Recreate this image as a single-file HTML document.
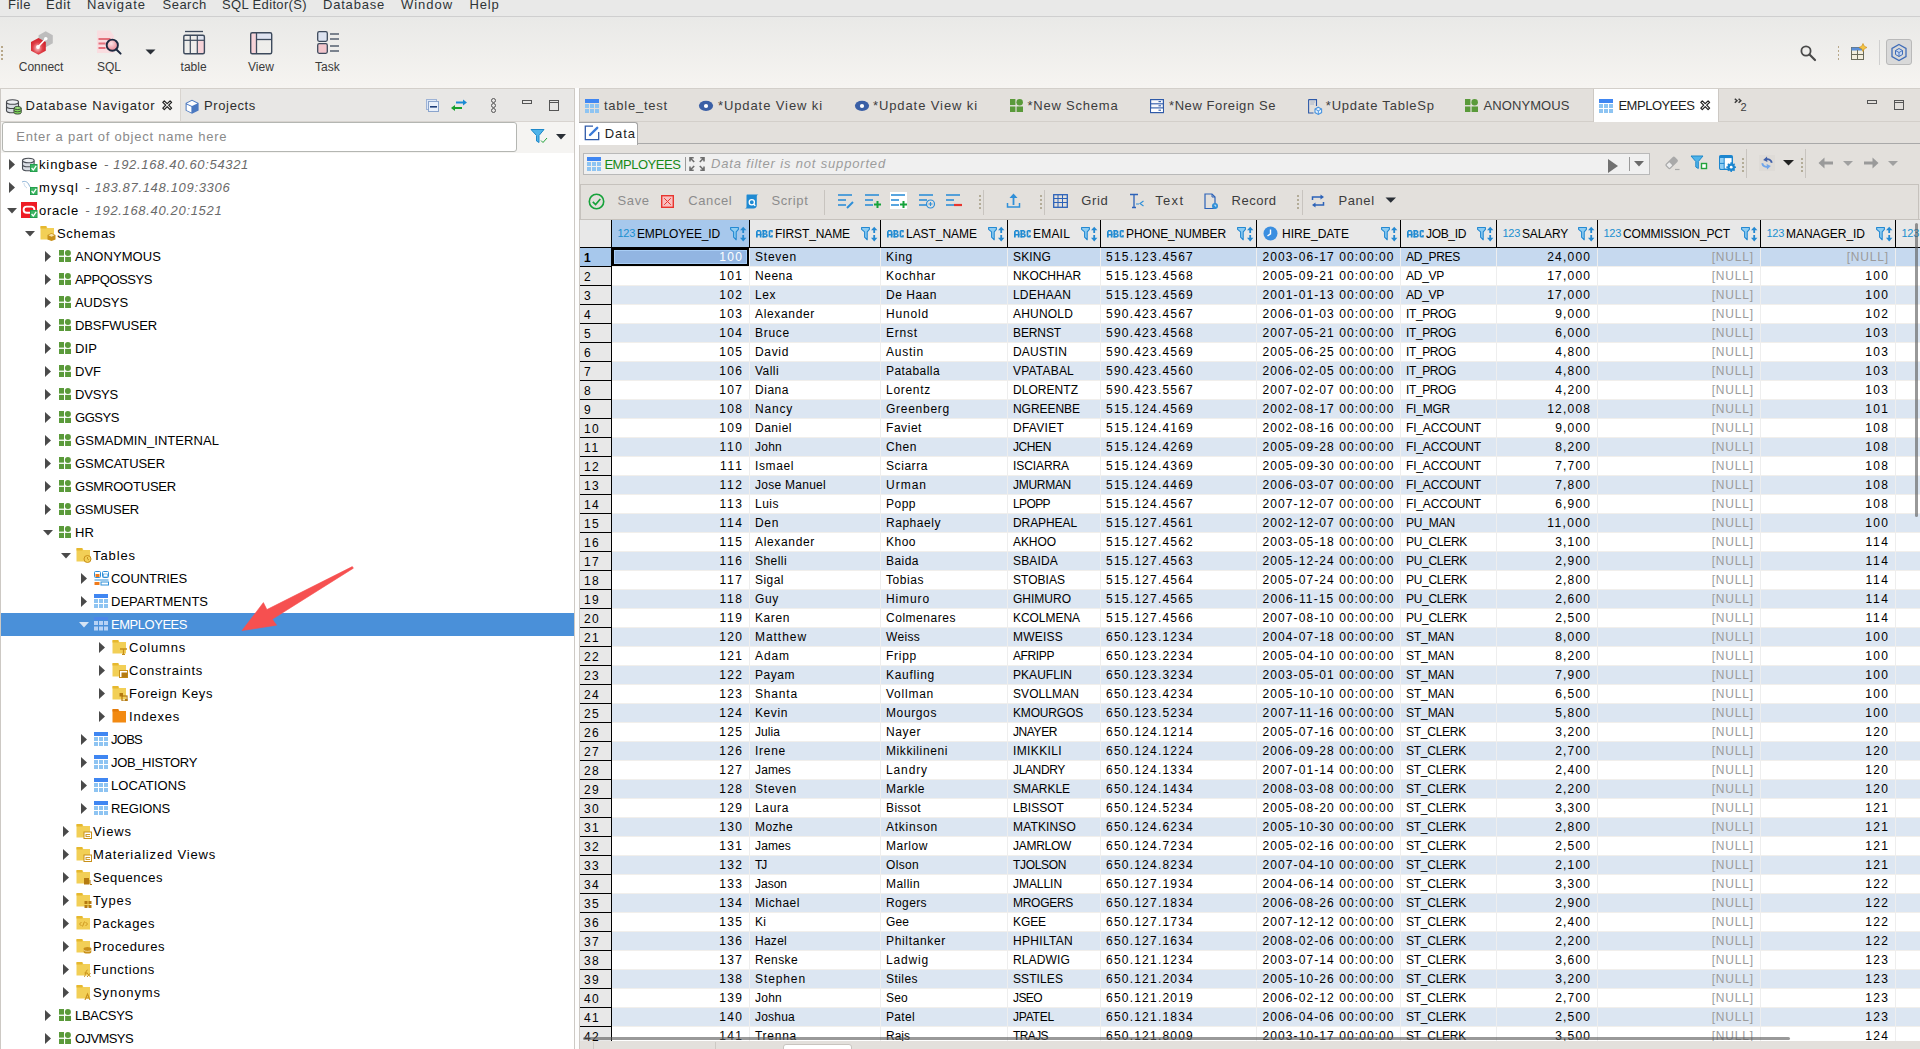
<!DOCTYPE html>
<html><head><meta charset="utf-8"><title>DBeaver</title><style>
html,body{margin:0;padding:0;width:1920px;height:1049px;overflow:hidden;background:#ffffff;}
body{position:relative;font-family:"Liberation Sans",sans-serif;}
div,svg{position:absolute;box-sizing:content-box;}
.t{white-space:pre;line-height:normal;}
</style></head><body>
<div style="left:0px;top:0px;width:1920px;height:16px;background:#e9e9e8;"></div>
<div style="left:0px;top:16px;width:1920px;height:1px;background:#cfcfcf;"></div>
<div class="t" style="left:8.00px;top:-3px;font-size:13px;color:#2e3436;letter-spacing:0.512px">File</div>
<div class="t" style="left:46.00px;top:-3px;font-size:13px;color:#2e3436;letter-spacing:0.648px">Edit</div>
<div class="t" style="left:87.00px;top:-3px;font-size:13px;color:#2e3436;letter-spacing:0.961px">Navigate</div>
<div class="t" style="left:162.60px;top:-3px;font-size:13px;color:#2e3436;letter-spacing:0.466px">Search</div>
<div class="t" style="left:222.00px;top:-3px;font-size:13px;color:#2e3436;letter-spacing:0.351px">SQL Editor(S)</div>
<div class="t" style="left:323.00px;top:-3px;font-size:13px;color:#2e3436;letter-spacing:0.793px">Database</div>
<div class="t" style="left:401.00px;top:-3px;font-size:13px;color:#2e3436;letter-spacing:0.958px">Window</div>
<div class="t" style="left:469.60px;top:-3px;font-size:13px;color:#2e3436;letter-spacing:0.812px">Help</div>
<div style="left:0px;top:17px;width:1920px;height:71px;background:linear-gradient(#e9e9e7,#f6f4f1);"></div>
<div style="left:0px;top:88px;width:1920px;height:1px;background:#d3cfca;"></div>
<div style="left:1px;top:46px;width:2px;height:2px;background:#b8a88a;"></div>
<div style="left:1px;top:50px;width:2px;height:2px;background:#b8a88a;"></div>
<div style="left:1px;top:54px;width:2px;height:2px;background:#b8a88a;"></div>
<div style="left:1px;top:58px;width:2px;height:2px;background:#b8a88a;"></div>
<svg style="left:28px;top:29px" width="28" height="28" viewBox="0 0 28 28">
<defs><radialGradient id="cg" cx="0.45" cy="0.6" r="0.6"><stop offset="0" stop-color="#f6c9cc"/><stop offset="0.55" stop-color="#e04048"/><stop offset="1" stop-color="#d01e28"/></radialGradient></defs>
<g transform="translate(-28,-29)">
<polygon points="45.7,31.2 52.8,35.2 52.8,43.2 45.7,47.2 38.6,43.2 38.6,35.2" fill="#bdbdbd"/>
<polygon points="38.5,38 45.8,42 45.8,50.8 38.5,54.8 31,50.8 31,42" fill="url(#cg)"/>
<line x1="38" y1="47" x2="45.5" y2="39" stroke="#ffffff" stroke-width="1.6" stroke-linecap="round"/>
<circle cx="45.8" cy="38.8" r="1.8" fill="#ffffff"/>
<circle cx="38" cy="47" r="1.9" fill="#ffffff"/>
</g></svg>
<svg style="left:96px;top:29px" width="28" height="28" viewBox="0 0 28 28">
<defs><radialGradient id="sg" cx="0.4" cy="0.35" r="0.7"><stop offset="0" stop-color="#fbe3e6"/><stop offset="1" stop-color="#e8808c"/></radialGradient></defs>
<g transform="translate(-96,-29)">
<polygon points="97,30.5 110,30.5 114,36 114,53 97,53" fill="#f9dde0"/>
<rect x="98.5" y="38" width="12" height="2" fill="#e4707c"/>
<rect x="98.5" y="42.5" width="7" height="2" fill="#e4707c"/>
<rect x="98.5" y="47" width="7" height="2" fill="#e4707c"/>
<circle cx="112.3" cy="45.2" r="5.6" fill="url(#sg)" stroke="#1d2940" stroke-width="1.9"/>
<line x1="116.2" y1="49.2" x2="120.6" y2="53.6" stroke="#1d2940" stroke-width="2" stroke-linecap="round"/>
</g></svg>
<svg style="left:145px;top:49px" width="12" height="7" viewBox="0 0 12 7"><polygon points="0.5,0.5 10.5,0.5 5.5,5.5" fill="#2a2f36"/></svg>
<svg style="left:180px;top:28px" width="30" height="30" viewBox="0 0 30 30">
<g transform="translate(-180,-28)">
<line x1="185" y1="31.5" x2="203" y2="31.5" stroke="#3d4a5c" stroke-width="1.3"/>
<rect x="203" y="36" width="2" height="17" fill="#f6d3d8"/>
<rect x="198" y="36" width="6" height="17" fill="#f6d3d8"/>
<rect x="198" y="36" width="6" height="4" fill="#dfe3ee"/>
<rect x="183.8" y="35.3" width="20.6" height="18.4" rx="1.5" fill="none" stroke="#3d4a5c" stroke-width="1.4"/>
<line x1="184" y1="40.3" x2="204" y2="40.3" stroke="#3d4a5c" stroke-width="1.2"/>
<line x1="190.3" y1="35.5" x2="190.3" y2="53.5" stroke="#3d4a5c" stroke-width="1.2"/>
<line x1="197.3" y1="35.5" x2="197.3" y2="53.5" stroke="#3d4a5c" stroke-width="1.2"/>
</g></svg>
<svg style="left:246px;top:28px" width="30" height="30" viewBox="0 0 30 30">
<g transform="translate(-246,-28)">
<rect x="251" y="33" width="5" height="20" fill="#f6d3d8"/>
<rect x="257" y="33" width="15" height="6" fill="#dfe3f0"/>
<rect x="250.7" y="32.7" width="21" height="21" rx="1.5" fill="none" stroke="#3d4a5c" stroke-width="1.4"/>
<line x1="256.5" y1="33" x2="256.5" y2="53.5" stroke="#3d4a5c" stroke-width="1.3"/>
<line x1="256.5" y1="39.5" x2="272" y2="39.5" stroke="#3d4a5c" stroke-width="1.3"/>
</g></svg>
<svg style="left:314px;top:28px" width="30" height="30" viewBox="0 0 30 30">
<g transform="translate(-314,-28)">
<rect x="317.7" y="31.7" width="9.6" height="9.6" rx="1.5" fill="#dde3f0" stroke="#3d4a5c" stroke-width="1.3"/>
<rect x="317.7" y="43.7" width="9.6" height="9.6" rx="1.5" fill="#f2c6cc" stroke="#3d4a5c" stroke-width="1.3"/>
<line x1="330" y1="34" x2="339" y2="34" stroke="#3d4a5c" stroke-width="1.3"/>
<line x1="330" y1="39" x2="339" y2="39" stroke="#3d4a5c" stroke-width="1.3"/>
<line x1="330" y1="46" x2="339" y2="46" stroke="#3d4a5c" stroke-width="1.3"/>
<line x1="330" y1="51" x2="339" y2="51" stroke="#3d4a5c" stroke-width="1.3"/>
</g></svg>
<svg style="left:1798px;top:43px" width="22" height="20" viewBox="0 0 22 20">
<g transform="translate(-1798,-43)">
<circle cx="1806" cy="51" r="4.6" fill="none" stroke="#4a4a4a" stroke-width="1.8"/>
<line x1="1809.5" y1="54.5" x2="1815" y2="60" stroke="#4a4a4a" stroke-width="2.2" stroke-linecap="round"/>
</g></svg>
<div style="left:1838px;top:46px;width:1px;height:2px;background:#b8a88a;"></div>
<div style="left:1838px;top:50px;width:1px;height:2px;background:#b8a88a;"></div>
<div style="left:1838px;top:54px;width:1px;height:2px;background:#b8a88a;"></div>
<div style="left:1838px;top:58px;width:1px;height:2px;background:#b8a88a;"></div>
<svg style="left:1849px;top:43px" width="20" height="20" viewBox="0 0 20 20">
<g transform="translate(-1849,-43)">
<rect x="1851.5" y="47.5" width="12" height="12" fill="#f3eedd" stroke="#6b6b5a" stroke-width="1"/>
<rect x="1851.5" y="47.5" width="12" height="3" fill="#5b8fd8"/>
<line x1="1857.5" y1="50" x2="1857.5" y2="59.5" stroke="#6b6b5a" stroke-width="1"/>
<line x1="1851.5" y1="54.5" x2="1863.5" y2="54.5" stroke="#6b6b5a" stroke-width="1"/>
<path d="M1863 43.5 L1864.3 46.2 L1867 47.5 L1864.3 48.8 L1863 51.5 L1861.7 48.8 L1859 47.5 L1861.7 46.2 Z" fill="#f5c542" stroke="#c98a12" stroke-width="0.6"/>
</g></svg>
<div style="left:1879px;top:40px;width:1px;height:25px;background:#cfcfcf;"></div>
<div style="left:1886px;top:39px;width:24px;height:24px;border:1px solid #b9b9b9;background:#d9d9d9;border-radius:3px;"></div>
<svg style="left:1889px;top:42px" width="20" height="20" viewBox="0 0 20 20">
<g transform="translate(-1889,-42)">
<polygon points="1899,44.5 1906,48.5 1906,56.5 1899,60.5 1892,56.5 1892,48.5" fill="none" stroke="#3f6cb8" stroke-width="1.3"/>
<polygon points="1899,48.5 1902.5,50.5 1902.5,54.5 1899,56.5 1895.5,54.5 1895.5,50.5" fill="#c9d9f2" stroke="#3f6cb8" stroke-width="1"/>
<line x1="1899" y1="52.5" x2="1899" y2="56.5" stroke="#3f6cb8" stroke-width="0.9"/>
<line x1="1895.5" y1="50.5" x2="1899" y2="52.5" stroke="#3f6cb8" stroke-width="0.9"/>
<line x1="1902.5" y1="50.5" x2="1899" y2="52.5" stroke="#3f6cb8" stroke-width="0.9"/>
</g></svg>
<div class="t" style="left:18.75px;top:60px;font-size:12px;color:#3a3a3a">Connect</div>
<div class="t" style="left:97.00px;top:60px;font-size:12px;color:#3a3a3a">SQL</div>
<div class="t" style="left:180.60px;top:60px;font-size:12px;color:#3a3a3a">table</div>
<div class="t" style="left:248.00px;top:60px;font-size:12px;color:#3a3a3a">View</div>
<div class="t" style="left:315.00px;top:60px;font-size:12px;color:#3a3a3a">Task</div>
<div style="left:0px;top:89px;width:575px;height:960px;background:#ffffff;"></div>
<div style="left:0px;top:89px;width:1px;height:960px;background:#cdc9c4;"></div>
<div style="left:574px;top:89px;width:1px;height:960px;background:#cdc9c4;"></div>
<div style="left:1px;top:89px;width:573px;height:32px;background:#e8e7e5;"></div>
<div style="left:1px;top:89px;width:179px;height:32px;background:#f5f4f2;"></div>
<div style="left:180px;top:89px;width:1px;height:32px;background:#d8d4cf;"></div>
<div style="left:1px;top:121px;width:573px;height:1px;background:#d8d4d0;"></div>
<div style="left:1px;top:122px;width:573px;height:31px;background:#f5f4f2;"></div>
<div style="left:2px;top:122px;width:513px;height:28px;border:1px solid #b4b6b2;background:#ffffff;border-radius:3px;"></div>
<div class="t" style="left:25.50px;top:98px;font-size:13px;color:#1e1e1e;letter-spacing:0.839px">Database Navigator</div>
<div class="t" style="left:204.00px;top:98px;font-size:13px;color:#2e2e2e;letter-spacing:0.629px">Projects</div>
<div class="t" style="left:16.30px;top:129px;font-size:13px;color:#8a8a8a;letter-spacing:0.767px">Enter a part of object name here</div>
<svg style="left:5px;top:99px" width="18" height="17" viewBox="0 0 18 17">
<g transform="translate(-5,-99)">
<path d="M6.5 102 V110.5 A6 2.3 0 0 0 18.5 110.5 V102" fill="#d9dde3" stroke="#45484d" stroke-width="1.1"/>
<ellipse cx="12.5" cy="102" rx="6" ry="2.3" fill="#eef0f3" stroke="#45484d" stroke-width="1.1"/>
<path d="M6.5 106.2 A6 2.3 0 0 0 18.5 106.2" fill="none" stroke="#45484d" stroke-width="1.1"/>
<path d="M14 108 V112.6 A3.6 1.5 0 0 0 21.2 112.6 V108" fill="#7fd85c" stroke="#3d4a3a" stroke-width="1"/>
<ellipse cx="17.6" cy="108" rx="3.6" ry="1.5" fill="#9be77c" stroke="#3d4a3a" stroke-width="1"/>
<path d="M14 110.3 A3.6 1.5 0 0 0 21.2 110.3" fill="none" stroke="#3d4a3a" stroke-width="0.9"/>
</g></svg>
<svg style="left:162px;top:100px" width="11" height="11" viewBox="0 0 11 11"><polygon points="0.8,2.3 2.3,0.8 5.2,3.7 8.1,0.8 9.6,2.3 6.7,5.2 9.6,8.1 8.1,9.6 5.2,6.7 2.3,9.6 0.8,8.1 3.7,5.2" fill="#f5f4f2" stroke="#1e1e1e" stroke-width="1.2" stroke-linejoin="round"/></svg>
<svg style="left:185px;top:99px" width="15" height="15" viewBox="0 0 15 15">
<g transform="translate(-185,-99)">
<polygon points="192,99.8 198.6,103 198.6,110.6 192,113.8 185.6,110.6 185.6,103" fill="#4a78c0"/>
<polygon points="192,100.8 197.4,103.4 192,106 186.6,103.4" fill="#ffffff"/>
<polygon points="186.6,104.4 191.4,106.8 191.4,112.6 186.6,110.2" fill="#ffffff"/>
</g></svg>
<svg style="left:425px;top:98px" width="16" height="16" viewBox="0 0 16 16">
<rect x="1.5" y="1.5" width="10" height="10" fill="#dde7f6" stroke="#9db3d6" stroke-width="1"/>
<rect x="3.5" y="3.5" width="10" height="10" fill="#e9f0fa" stroke="#8aa4cc" stroke-width="1"/>
<rect x="5" y="8" width="7" height="1.6" fill="#1f3f7a"/>
</svg>
<svg style="left:450px;top:99px" width="18" height="13" viewBox="0 0 18 13">
<path d="M6 3.5 H15" stroke="#1a8ad4" stroke-width="2"/><polygon points="13,0.5 17,3.5 13,6.5" fill="#1a8ad4"/>
<path d="M4 9 H12" stroke="#17a02c" stroke-width="2"/><polygon points="5,6 1,9 5,12" fill="#17a02c"/>
</svg>
<svg style="left:489px;top:97px" width="9" height="17" viewBox="0 0 9 17"><circle cx="4.5" cy="3.5" r="2" fill="none" stroke="#555" stroke-width="1"/><circle cx="4.5" cy="8.5" r="2" fill="none" stroke="#555" stroke-width="1"/><circle cx="4.5" cy="13.5" r="2" fill="none" stroke="#555" stroke-width="1"/></svg>
<div style="left:522px;top:100px;width:8px;height:2px;border:1px solid #555555;background:transparent;"></div>
<div style="left:549px;top:100px;width:8px;height:9px;border:1px solid #555555;background:transparent;"></div>
<div style="left:550px;top:102px;width:8px;height:1px;background:#555555;"></div>
<svg style="left:529px;top:128px" width="20" height="17" viewBox="0 0 20 17">
<polygon points="2,1.5 15,1.5 10,7.5 10,14.5 7.5,13 7.5,7.5" fill="#4fb4ea" stroke="#1e88c9" stroke-width="1"/>
<path d="M12 12.5 L14 14.5 L18 10" fill="none" stroke="#22a33a" stroke-width="1"/>
</svg>
<svg style="left:556px;top:134px" width="11" height="6" viewBox="0 0 11 6"><polygon points="0,0 10,0 5,5.5" fill="#2a2f36"/></svg>
<div style="left:575px;top:88px;width:4px;height:961px;background:#fdfdfd;"></div>
<div style="left:579px;top:89px;width:1341px;height:960px;background:#e3e0dc;"></div>
<div style="left:579px;top:89px;width:1px;height:960px;background:#cdc9c4;"></div>
<div style="left:580px;top:121px;width:1340px;height:1px;background:#d3cfca;"></div>
<div style="left:1594px;top:89px;width:124px;height:33px;background:#ffffff;"></div>
<div style="left:1593px;top:89px;width:1px;height:33px;background:#cdc9c4;"></div>
<div style="left:1718px;top:89px;width:1px;height:33px;background:#cdc9c4;"></div>
<div class="t" style="left:604.00px;top:98px;font-size:13px;color:#3c3c3c;letter-spacing:0.762px">table_test</div>
<div class="t" style="left:718.00px;top:98px;font-size:13px;color:#3c3c3c;letter-spacing:0.897px">*Update View ki</div>
<div class="t" style="left:873.00px;top:98px;font-size:13px;color:#3c3c3c;letter-spacing:0.897px">*Update View ki</div>
<div class="t" style="left:1027.50px;top:98px;font-size:13px;color:#3c3c3c;letter-spacing:0.784px">*New Schema</div>
<div class="t" style="left:1169.00px;top:98px;font-size:13px;color:#3c3c3c;letter-spacing:0.581px">*New Foreign Se</div>
<div class="t" style="left:1325.80px;top:98px;font-size:13px;color:#3c3c3c;letter-spacing:0.777px">*Update TableSp</div>
<div class="t" style="left:1483.50px;top:98px;font-size:13px;color:#3c3c3c;letter-spacing:0.085px">ANONYMOUS</div>
<div class="t" style="left:1618.40px;top:98px;font-size:13px;color:#1e1e1e;letter-spacing:-0.467px">EMPLOYEES</div>
<div style="left:638px;top:143px;width:1282px;height:1px;background:#a9a9a9;"></div>
<div style="left:579px;top:122px;width:58px;height:22px;background:#ffffff;border-top:1px solid #a4a4a4;border-right:1px solid #a4a4a4;border-top-right-radius:3px;"></div>
<div class="t" style="left:604.80px;top:126px;font-size:13px;color:#1e1e1e;letter-spacing:0.883px">Data</div>
<div style="left:583px;top:153px;width:1065px;height:20px;border:1px solid #b9b9b9;background:#f0f0f0;"></div>
<div class="t" style="left:604.40px;top:157px;font-size:13px;color:#178a17;letter-spacing:-0.467px">EMPLOYEES</div>
<div style="left:685px;top:157px;width:1px;height:14px;background:#9a9a9a;"></div>
<div class="t" style="left:711.00px;top:156px;font-size:13px;color:#9c9c9c;letter-spacing:0.830px;font-style:italic">Data filter is not supported</div>
<div style="left:1629px;top:157px;width:1px;height:14px;background:#9a9a9a;"></div>
<div style="left:580px;top:184px;width:1339px;height:1px;background:#c6c2bd;"></div>
<div style="left:580px;top:184px;width:1px;height:36px;background:#c6c2bd;"></div>
<div style="left:1918px;top:184px;width:1px;height:36px;background:#c6c2bd;"></div>
<div class="t" style="left:617.60px;top:193px;font-size:13px;color:#8c8c8c;letter-spacing:0.590px">Save</div>
<div class="t" style="left:688.30px;top:193px;font-size:13px;color:#8c8c8c;letter-spacing:0.589px">Cancel</div>
<div class="t" style="left:771.40px;top:193px;font-size:13px;color:#8c8c8c;letter-spacing:0.628px">Script</div>
<div class="t" style="left:1081.30px;top:193px;font-size:13px;color:#3c3c3c;letter-spacing:0.609px">Grid</div>
<div class="t" style="left:1155.30px;top:193px;font-size:13px;color:#3c3c3c;letter-spacing:1.289px">Text</div>
<div class="t" style="left:1231.60px;top:193px;font-size:13px;color:#3c3c3c;letter-spacing:0.513px">Record</div>
<div class="t" style="left:1338.60px;top:193px;font-size:13px;color:#3c3c3c;letter-spacing:0.550px">Panel</div>
<div style="left:824px;top:190px;width:1px;height:25px;background:#c8c4bf;"></div>
<div style="left:983px;top:190px;width:1px;height:25px;background:#c8c4bf;"></div>
<div style="left:1044px;top:190px;width:1px;height:25px;background:#c8c4bf;"></div>
<div style="left:1302px;top:190px;width:1px;height:25px;background:#c8c4bf;"></div>
<div style="left:1746px;top:149px;width:1px;height:29px;background:#c8c4bf;"></div>
<div style="left:1805px;top:149px;width:1px;height:29px;background:#c8c4bf;"></div>
<svg style="left:585px;top:99px" width="14" height="14" viewBox="0 0 14 14">
<rect x="0" y="0" width="14" height="4" fill="#3f86f2"/>
<rect x="0" y="5" width="4" height="4" fill="#8ec4f2"/><rect x="5" y="5" width="4" height="4" fill="#8ec4f2"/><rect x="10" y="5" width="4" height="4" fill="#8ec4f2"/>
<rect x="0" y="10" width="4" height="4" fill="#8ec4f2"/><rect x="5" y="10" width="4" height="4" fill="#8ec4f2"/><rect x="10" y="10" width="4" height="4" fill="#8ec4f2"/>
</svg>
<svg style="left:698px;top:100px" width="16" height="12" viewBox="0 0 16 12"><ellipse cx="8" cy="5.8" rx="7.1" ry="5.1" fill="#3a5fa6"/><circle cx="8" cy="6" r="2.1" fill="#ffffff"/></svg>
<svg style="left:854px;top:100px" width="16" height="12" viewBox="0 0 16 12"><ellipse cx="8" cy="5.8" rx="7.1" ry="5.1" fill="#3a5fa6"/><circle cx="8" cy="6" r="2.1" fill="#ffffff"/></svg>
<svg style="left:1010px;top:99px" width="13" height="13" viewBox="0 0 13 13"><g transform="scale(1.083)"><rect x="0" y="0" width="5" height="5.6" fill="#5a9a3a"/><circle cx="8.9" cy="3" r="3" fill="#5a9a3a"/><rect x="0" y="6.9" width="5" height="5.1" fill="#5a9a3a"/><rect x="6.1" y="6.9" width="5.9" height="5.1" fill="#5a9a3a"/></g></svg>
<svg style="left:1149px;top:98px" width="16" height="16" viewBox="0 0 16 16">
<rect x="1.6" y="1.6" width="12.8" height="13" fill="#f7f8fb" stroke="#2f5aa8" stroke-width="1.2"/>
<rect x="2.2" y="10.4" width="11.6" height="3.6" fill="#ffffff"/>
<line x1="1.6" y1="5.8" x2="14.4" y2="5.8" stroke="#2f5aa8" stroke-width="1.1"/>
<line x1="1.6" y1="9.9" x2="14.4" y2="9.9" stroke="#2f5aa8" stroke-width="1.1"/>
<line x1="9.5" y1="3.6" x2="12" y2="3.6" stroke="#2f5aa8" stroke-width="1.1"/>
<line x1="9.5" y1="7.8" x2="12" y2="7.8" stroke="#2f5aa8" stroke-width="1.1"/>
<line x1="9.5" y1="12.2" x2="12" y2="12.2" stroke="#2f5aa8" stroke-width="1.1"/>
</svg>
<svg style="left:1306px;top:98px" width="17" height="17" viewBox="0 0 17 17">
<path d="M2.6 1.6 H10.5 V8 M2.6 1.6 V15 H7.5" fill="none" stroke="#2f5aa8" stroke-width="1.1"/>
<line x1="4.2" y1="4" x2="9" y2="4" stroke="#a9b4c8" stroke-width="1"/>
<line x1="4.2" y1="6" x2="8" y2="6" stroke="#a9b4c8" stroke-width="1"/>
<polygon points="12.3,9.2 15.6,11 15.6,14.6 12.3,16.4 9,14.6 9,11" fill="#e8f2fc" stroke="#4a95e0" stroke-width="1.1"/>
<path d="M9 11 L12.3 12.8 L15.6 11 M12.3 12.8 V16.4" fill="none" stroke="#4a95e0" stroke-width="1"/>
</svg>
<svg style="left:1465px;top:99px" width="13" height="13" viewBox="0 0 13 13"><g transform="scale(1.083)"><rect x="0" y="0" width="5" height="5.6" fill="#5a9a3a"/><circle cx="8.9" cy="3" r="3" fill="#5a9a3a"/><rect x="0" y="6.9" width="5" height="5.1" fill="#5a9a3a"/><rect x="6.1" y="6.9" width="5.9" height="5.1" fill="#5a9a3a"/></g></svg>
<svg style="left:1599px;top:99px" width="14" height="14" viewBox="0 0 14 14">
<rect x="0" y="0" width="14" height="4" fill="#3f86f2"/>
<rect x="0" y="5" width="4" height="4" fill="#8ec4f2"/><rect x="5" y="5" width="4" height="4" fill="#8ec4f2"/><rect x="10" y="5" width="4" height="4" fill="#8ec4f2"/>
<rect x="0" y="10" width="4" height="4" fill="#8ec4f2"/><rect x="5" y="10" width="4" height="4" fill="#8ec4f2"/><rect x="10" y="10" width="4" height="4" fill="#8ec4f2"/>
</svg>
<svg style="left:1700px;top:100px" width="11" height="11" viewBox="0 0 11 11"><polygon points="0.8,2.3 2.3,0.8 5.2,3.7 8.1,0.8 9.6,2.3 6.7,5.2 9.6,8.1 8.1,9.6 5.2,6.7 2.3,9.6 0.8,8.1 3.7,5.2" fill="#ffffff" stroke="#1e1e1e" stroke-width="1.2" stroke-linejoin="round"/></svg>
<svg style="left:1734px;top:98px" width="9" height="6" viewBox="0 0 9 6"><path d="M0.8 0.8 L3 2.8 L0.8 4.8 M4.6 0.8 L6.8 2.8 L4.6 4.8" fill="none" stroke="#3a3a3a" stroke-width="1.5"/></svg>
<div class="t" style="left:1740.50px;top:101px;font-size:11px;color:#3c3c3c">2</div>
<div style="left:1867px;top:100px;width:8px;height:2px;border:1px solid #555555;background:transparent;"></div>
<div style="left:1894px;top:100px;width:8px;height:8px;border:1px solid #555555;background:transparent;"></div>
<div style="left:1895px;top:102px;width:8px;height:1px;background:#555555;"></div>
<svg style="left:584px;top:125px" width="16" height="16" viewBox="0 0 16 16">
<path d="M9 1.2 H1.3 V14.7 H14.7 V7" fill="none" stroke="#2f5aa8" stroke-width="1.3"/>
<line x1="6" y1="10" x2="13.2" y2="2.8" stroke="#3a7ad8" stroke-width="2.4" stroke-linecap="round"/>
</svg>
<svg style="left:587px;top:157px" width="14" height="14" viewBox="0 0 14 14">
<rect x="0" y="0" width="14" height="4" fill="#3f86f2"/>
<rect x="0" y="5" width="4" height="4" fill="#8ec4f2"/><rect x="5" y="5" width="4" height="4" fill="#8ec4f2"/><rect x="10" y="5" width="4" height="4" fill="#8ec4f2"/>
<rect x="0" y="10" width="4" height="4" fill="#8ec4f2"/><rect x="5" y="10" width="4" height="4" fill="#8ec4f2"/><rect x="10" y="10" width="4" height="4" fill="#8ec4f2"/>
</svg>
<svg style="left:688px;top:156px" width="18" height="16" viewBox="0 0 18 16">
<g fill="none" stroke="#6e6e6e" stroke-width="1.6">
<path d="M2 5.5 V1.8 H5.7 M2 1.8 L6.2 6"/><path d="M16 5.5 V1.8 H12.3 M16 1.8 L11.8 6"/>
<path d="M2 10.5 V14.2 H5.7 M2 14.2 L6.2 10"/><path d="M16 10.5 V14.2 H12.3 M16 14.2 L11.8 10"/>
</g></svg>
<svg style="left:1607px;top:158px" width="12" height="16" viewBox="0 0 12 16"><polygon points="1,1 11,8 1,15" fill="#707070"/></svg>
<svg style="left:1634px;top:161px" width="11" height="6" viewBox="0 0 11 6"><polygon points="0,0 10,0 5,5.5" fill="#6a6a6a"/></svg>
<svg style="left:1664px;top:155px" width="17" height="16" viewBox="0 0 17 16">
<g transform="rotate(-45 7.5 8)"><rect x="1.2" y="4.6" width="13" height="6.8" rx="1.8" fill="#a9a9a9"/><rect x="2.4" y="5.8" width="4.2" height="4.4" rx="0.8" fill="#ececec"/></g>
<line x1="11" y1="14.5" x2="15.5" y2="14.5" stroke="#a9a9a9" stroke-width="1.2"/>
</svg>
<svg style="left:1690px;top:155px" width="18" height="15" viewBox="0 0 18 15">
<polygon points="1,1 13,1 8.3,6.5 8.3,13.5 5.8,12 5.8,6.5" fill="#4fb4ea" stroke="#1e88c9" stroke-width="1"/>
<rect x="11.5" y="8.5" width="5" height="5" fill="#fff" stroke="#22a33a" stroke-width="1.4"/>
</svg>
<svg style="left:1719px;top:155px" width="17" height="17" viewBox="0 0 17 17">
<rect x="0.7" y="0.7" width="12.6" height="13.6" rx="1.2" fill="#ffffff" stroke="#1c86cf" stroke-width="1.4"/>
<rect x="0.7" y="0.7" width="12.6" height="2.4" fill="#1c86cf"/>
<rect x="1.4" y="3.1" width="3.6" height="10.5" fill="#8fd0f5"/>
<line x1="5.2" y1="3" x2="5.2" y2="14" stroke="#1c86cf" stroke-width="1"/>
<line x1="1" y1="8.4" x2="5.2" y2="8.4" stroke="#1c86cf" stroke-width="1"/>
<circle cx="12.2" cy="12.2" r="3.8" fill="#1c86cf"/>
<g stroke="#1c86cf" stroke-width="1.5"><line x1="12.2" y1="7.3" x2="12.2" y2="17"/><line x1="7.3" y1="12.2" x2="17" y2="12.2"/><line x1="8.8" y1="8.8" x2="15.6" y2="15.6"/><line x1="15.6" y1="8.8" x2="8.8" y2="15.6"/></g>
<circle cx="12.2" cy="12.2" r="1.4" fill="#ffffff"/>
</svg>
<div style="left:1742px;top:158px;width:2px;height:2px;background:#b3ac98;"></div>
<div style="left:1801px;top:158px;width:2px;height:2px;background:#b3ac98;"></div>
<div style="left:1742px;top:162px;width:2px;height:2px;background:#b3ac98;"></div>
<div style="left:1801px;top:162px;width:2px;height:2px;background:#b3ac98;"></div>
<div style="left:1742px;top:166px;width:2px;height:2px;background:#b3ac98;"></div>
<div style="left:1801px;top:166px;width:2px;height:2px;background:#b3ac98;"></div>
<div style="left:1742px;top:170px;width:2px;height:2px;background:#b3ac98;"></div>
<div style="left:1801px;top:170px;width:2px;height:2px;background:#b3ac98;"></div>
<div style="left:1759px;top:155px;width:16px;height:16px;background:#dedbd7;"></div>
<svg style="left:1760px;top:156px" width="14" height="14" viewBox="0 0 14 14">
<path d="M11.8 6.8 C11.2 4 8.6 2.6 6 3.4" fill="none" stroke="#3f5fa8" stroke-width="1.9"/><polygon points="3.2,3.9 7,0.6 7.4,6" fill="#3f5fa8"/>
<path d="M2.2 7.2 C2.8 10 5.4 11.4 8 10.6" fill="none" stroke="#6fa5ea" stroke-width="1.9"/><polygon points="10.8,10.1 7,13.4 6.6,8" fill="#6fa5ea"/>
</svg>
<svg style="left:1783px;top:160px" width="12" height="6" viewBox="0 0 12 6"><polygon points="0,0 11,0 5.5,5.5" fill="#222"/></svg>
<svg style="left:1818px;top:157px" width="16" height="12" viewBox="0 0 16 12"><path d="M15 6 H5" stroke="#9a9a9a" stroke-width="3"/><polygon points="0.5,6 6.5,0.5 6.5,11.5" fill="#9a9a9a"/></svg>
<svg style="left:1843px;top:161px" width="10" height="6" viewBox="0 0 10 6"><polygon points="0,0 10,0 5,5" fill="#a0a0a0"/></svg>
<svg style="left:1863px;top:157px" width="16" height="12" viewBox="0 0 16 12"><path d="M1 6 H11" stroke="#9a9a9a" stroke-width="3"/><polygon points="15.5,6 9.5,0.5 9.5,11.5" fill="#9a9a9a"/></svg>
<svg style="left:1888px;top:161px" width="10" height="6" viewBox="0 0 10 6"><polygon points="0,0 10,0 5,5" fill="#a0a0a0"/></svg>
<svg style="left:588px;top:193px" width="17" height="17" viewBox="0 0 17 17"><circle cx="8.5" cy="8.5" r="7.2" fill="none" stroke="#16a23a" stroke-width="1.6"/><path d="M4.8 8.8 L7.6 11.5 L12.3 6" fill="none" stroke="#16a23a" stroke-width="1.7"/></svg>
<svg style="left:661px;top:195px" width="13" height="13" viewBox="0 0 13 13"><rect x="0.7" y="0.7" width="11.6" height="11.6" fill="#f9c0c0" stroke="#e8352e" stroke-width="1.4"/><path d="M3.2 3.2 L9.8 9.8 M9.8 3.2 L3.2 9.8" stroke="#e8352e" stroke-width="1"/></svg>
<svg style="left:743px;top:192px" width="17" height="18" viewBox="0 0 17 18">
<path d="M4 2.5 H15.5 C14.3 2.5 13.8 3.5 13.8 4.5 V13 C13.8 15 12.8 16.5 10.5 16.5 H1.5 C3 16.5 3.5 15.5 3.5 14.5 V4 C3.5 3 3.8 2.5 4 2.5 Z" fill="#1f8ad2"/>
<circle cx="8.8" cy="10.3" r="2.6" fill="none" stroke="#ffffff" stroke-width="1.3"/><line x1="10.7" y1="12.2" x2="12.3" y2="13.8" stroke="#ffffff" stroke-width="1.4"/>
</svg>
<svg style="left:837px;top:193px" width="18" height="17" viewBox="0 0 18 17"><g stroke="#2f8fd8" stroke-width="1.6"><line x1="1" y1="2" x2="15" y2="2"/><line x1="1" y1="7" x2="9" y2="7"/><line x1="1" y1="12" x2="9" y2="12"/></g><path d="M10 15 L16 9" stroke="#2f8fd8" stroke-width="2"/></svg>
<svg style="left:864px;top:193px" width="18" height="17" viewBox="0 0 18 17"><g stroke="#2f8fd8" stroke-width="1.6"><line x1="1" y1="2" x2="15" y2="2"/><line x1="1" y1="7" x2="9" y2="7"/><line x1="1" y1="12" x2="9" y2="12"/></g><path d="M10 11.5 H17 M13.5 8 V15" stroke="#16a23a" stroke-width="2"/></svg>
<div style="left:890px;top:192px;width:17px;height:17px;background:#ffffff;"></div>
<svg style="left:890px;top:193px" width="18" height="17" viewBox="0 0 18 17"><g stroke="#2f8fd8" stroke-width="1.6"><line x1="1" y1="2" x2="15" y2="2"/><line x1="1" y1="7" x2="9" y2="7"/><line x1="1" y1="12" x2="9" y2="12"/></g><path d="M10 11.5 H17 M13.5 8 V15" stroke="#16a23a" stroke-width="2"/></svg>
<svg style="left:918px;top:193px" width="18" height="17" viewBox="0 0 18 17"><g stroke="#2f8fd8" stroke-width="1.6"><line x1="1" y1="2" x2="15" y2="2"/><line x1="1" y1="7" x2="9" y2="7"/><line x1="1" y1="12" x2="9" y2="12"/></g><circle cx="12.5" cy="11" r="4" fill="none" stroke="#2f8fd8" stroke-width="1.2"/><path d="M10.5 11 H14.5 M12.5 9 V13" stroke="#2f8fd8" stroke-width="1.1"/></svg>
<svg style="left:945px;top:193px" width="18" height="17" viewBox="0 0 18 17"><g stroke="#2f8fd8" stroke-width="1.6"><line x1="1" y1="2" x2="15" y2="2"/><line x1="1" y1="7" x2="9" y2="7"/><line x1="1" y1="12" x2="9" y2="12"/></g><path d="M9 12 H17" stroke="#e8352e" stroke-width="2.2"/></svg>
<div style="left:979px;top:195px;width:2px;height:2px;background:#b3ac98;"></div>
<div style="left:1040px;top:195px;width:2px;height:2px;background:#b3ac98;"></div>
<div style="left:1297px;top:195px;width:2px;height:2px;background:#b3ac98;"></div>
<div style="left:979px;top:199px;width:2px;height:2px;background:#b3ac98;"></div>
<div style="left:1040px;top:199px;width:2px;height:2px;background:#b3ac98;"></div>
<div style="left:1297px;top:199px;width:2px;height:2px;background:#b3ac98;"></div>
<div style="left:979px;top:203px;width:2px;height:2px;background:#b3ac98;"></div>
<div style="left:1040px;top:203px;width:2px;height:2px;background:#b3ac98;"></div>
<div style="left:1297px;top:203px;width:2px;height:2px;background:#b3ac98;"></div>
<div style="left:979px;top:207px;width:2px;height:2px;background:#b3ac98;"></div>
<div style="left:1040px;top:207px;width:2px;height:2px;background:#b3ac98;"></div>
<div style="left:1297px;top:207px;width:2px;height:2px;background:#b3ac98;"></div>
<svg style="left:1006px;top:192px" width="15" height="17" viewBox="0 0 15 17"><path d="M7.5 13 V3" stroke="#2f8fd8" stroke-width="1.8"/><polygon points="3.5,6 7.5,1.5 11.5,6" fill="#2f8fd8"/><path d="M1.5 11 V15 H13.5 V11" fill="none" stroke="#2f8fd8" stroke-width="1.5"/></svg>
<svg style="left:1053px;top:194px" width="15" height="14" viewBox="0 0 15 14"><rect x="0.7" y="0.7" width="13.6" height="12.6" fill="none" stroke="#2c62b8" stroke-width="1.3"/><g stroke="#2c62b8" stroke-width="1"><line x1="1" y1="4.5" x2="14" y2="4.5"/><line x1="1" y1="8.5" x2="14" y2="8.5"/><line x1="5" y1="1" x2="5" y2="13"/><line x1="9.5" y1="1" x2="9.5" y2="13"/></g></svg>
<svg style="left:1129px;top:193px" width="15" height="16" viewBox="0 0 15 16"><path d="M1 1.5 H9 M5 1.5 V14.5 M3 14.5 H7" stroke="#2c62b8" stroke-width="1.3" fill="none"/><path d="M14.5 8 L11 10.5 L14.5 13" fill="none" stroke="#2f8fd8" stroke-width="1.1"/><line x1="7" y1="11" x2="10" y2="11" stroke="#2f8fd8" stroke-width="1"/></svg>
<svg style="left:1204px;top:193px" width="15" height="17" viewBox="0 0 15 17"><path d="M1 1 H8 L11 4 V15.5 H1 Z" fill="none" stroke="#2c62b8" stroke-width="1.2"/><path d="M8 1 V4 H11" fill="none" stroke="#2c62b8" stroke-width="1"/><circle cx="11" cy="13" r="3" fill="#2f8fd8"/><path d="M11 11.5 V13 H12.3" stroke="#fff" stroke-width="0.8" fill="none"/></svg>
<svg style="left:1311px;top:194px" width="14" height="14" viewBox="0 0 14 14"><path d="M1.5 6 V3 H11" fill="none" stroke="#2c62b8" stroke-width="1.5"/><polygon points="9.5,0.5 13,3 9.5,5.5" fill="#2c62b8"/><path d="M12.5 8 V11 H3" fill="none" stroke="#2c62b8" stroke-width="1.5"/><polygon points="4.5,8.5 1,11 4.5,13.5" fill="#2c62b8"/></svg>
<svg style="left:1385px;top:197px" width="12" height="7" viewBox="0 0 12 7"><polygon points="0.5,0.5 11,0.5 5.75,5.8" fill="#2a2f36"/></svg>
<div style="left:1px;top:613px;width:573px;height:23px;background:#4a90d9;"></div>
<svg style="left:9px;top:159px" width="6" height="11" viewBox="0 0 6 11"><polygon points="0,0 6,5.5 0,11" fill="#4a4a4a"/></svg>
<svg style="left:21px;top:157px" width="16" height="16" viewBox="0 0 16 16"><path d="M1.5 3.5 V11.5 A5.8 2.3 0 0 0 13.1 11.5 V3.5" fill="#d9dde3" stroke="#4a4e55" stroke-width="1.1"/><ellipse cx="7.3" cy="3.5" rx="5.8" ry="2.3" fill="#eef0f3" stroke="#4a4e55" stroke-width="1.1"/><path d="M1.5 7.5 A5.8 2.3 0 0 0 13.1 7.5" fill="none" stroke="#4a4e55" stroke-width="1.1"/></svg>
<svg style="left:30px;top:164px" width="8" height="8" viewBox="0 0 8 8"><rect x="0" y="0" width="7.5" height="8" fill="#1f9a48"/><rect x="0.8" y="0.8" width="5.9" height="6.4" fill="#3cb563"/><path d="M1.6 4 L3.3 6 L6.2 1.8" fill="none" stroke="#ffffff" stroke-width="1.3"/></svg>
<div class="t" style="left:39.00px;top:157px;font-size:13px;color:#000000;letter-spacing:0.869px">kingbase</div>
<div class="t" style="left:104.00px;top:157px;font-size:13px;color:#6a6a6a;letter-spacing:0.674px;font-style:italic">- 192.168.40.60:54321</div>
<svg style="left:9px;top:182px" width="6" height="11" viewBox="0 0 6 11"><polygon points="0,0 6,5.5 0,11" fill="#4a4a4a"/></svg>
<svg style="left:21px;top:180px" width="16" height="16" viewBox="0 0 16 16"><path d="M1 2 C4 0.5 7 2 8 5 C9 7 10 8 11 9" fill="none" stroke="#8fb4d6" stroke-width="1"/><path d="M3 3 C3 5 4 7 6 8" fill="none" stroke="#b8cfe4" stroke-width="0.8"/></svg>
<svg style="left:30px;top:187px" width="8" height="8" viewBox="0 0 8 8"><rect x="0" y="0" width="7.5" height="8" fill="#1f9a48"/><rect x="0.8" y="0.8" width="5.9" height="6.4" fill="#3cb563"/><path d="M1.6 4 L3.3 6 L6.2 1.8" fill="none" stroke="#ffffff" stroke-width="1.3"/></svg>
<div class="t" style="left:39.00px;top:180px;font-size:13px;color:#000000;letter-spacing:1.209px">mysql</div>
<div class="t" style="left:85.30px;top:180px;font-size:13px;color:#6a6a6a;letter-spacing:0.674px;font-style:italic">- 183.87.148.109:3306</div>
<svg style="left:7px;top:208px" width="10" height="6" viewBox="0 0 10 6"><polygon points="0,0 10,0 5,5.5" fill="#4a4a4a"/></svg>
<svg style="left:21px;top:202px" width="16" height="16" viewBox="0 0 16 16"><rect x="0" y="0" width="16" height="16" fill="#ee1c25"/><rect x="2.6" y="4.6" width="10.8" height="6.2" rx="3.1" fill="none" stroke="#ffffff" stroke-width="1.9"/></svg>
<svg style="left:30px;top:210px" width="8" height="8" viewBox="0 0 8 8"><rect x="0" y="0" width="7.5" height="8" fill="#1f9a48"/><rect x="0.8" y="0.8" width="5.9" height="6.4" fill="#3cb563"/><path d="M1.6 4 L3.3 6 L6.2 1.8" fill="none" stroke="#ffffff" stroke-width="1.3"/></svg>
<div class="t" style="left:39.00px;top:203px;font-size:13px;color:#000000;letter-spacing:0.763px">oracle</div>
<div class="t" style="left:85.30px;top:203px;font-size:13px;color:#6a6a6a;letter-spacing:0.670px;font-style:italic">- 192.168.40.20:1521</div>
<svg style="left:25px;top:231px" width="10" height="6" viewBox="0 0 10 6"><polygon points="0,0 10,0 5,5.5" fill="#4a4a4a"/></svg>
<svg style="left:39.5px;top:225px" width="17" height="16" viewBox="0 0 17 16"><path d="M0.5 1.5 H6 L7.5 3 H14 V14.5 H0.5 Z" fill="#f2cf56"/><rect x="0.5" y="1" width="6" height="2.5" fill="#e6b82e"/><polygon points="11.5,8 15.5,10 15.5,14.5 11.5,16 7.5,14.5 7.5,10" fill="#c8901a"/><polygon points="11.5,8.8 14.5,10.3 11.5,11.8 8.5,10.3" fill="#f8e2a8"/></svg>
<div class="t" style="left:57.00px;top:226px;font-size:13px;color:#000000;letter-spacing:0.685px">Schemas</div>
<svg style="left:45px;top:251px" width="6" height="11" viewBox="0 0 6 11"><polygon points="0,0 6,5.5 0,11" fill="#4a4a4a"/></svg>
<svg style="left:59px;top:250px" width="12" height="12" viewBox="0 0 12 12"><g transform="scale(1.000)"><rect x="0" y="0" width="5" height="5.6" fill="#5a9a3a"/><circle cx="8.9" cy="3" r="3" fill="#5a9a3a"/><rect x="0" y="6.9" width="5" height="5.1" fill="#5a9a3a"/><rect x="6.1" y="6.9" width="5.9" height="5.1" fill="#5a9a3a"/></g></svg>
<div class="t" style="left:75.00px;top:249px;font-size:13px;color:#000000;letter-spacing:0.085px">ANONYMOUS</div>
<svg style="left:45px;top:274px" width="6" height="11" viewBox="0 0 6 11"><polygon points="0,0 6,5.5 0,11" fill="#4a4a4a"/></svg>
<svg style="left:59px;top:273px" width="12" height="12" viewBox="0 0 12 12"><g transform="scale(1.000)"><rect x="0" y="0" width="5" height="5.6" fill="#5a9a3a"/><circle cx="8.9" cy="3" r="3" fill="#5a9a3a"/><rect x="0" y="6.9" width="5" height="5.1" fill="#5a9a3a"/><rect x="6.1" y="6.9" width="5.9" height="5.1" fill="#5a9a3a"/></g></svg>
<div class="t" style="left:75.00px;top:272px;font-size:13px;color:#000000;letter-spacing:-0.436px">APPQOSSYS</div>
<svg style="left:45px;top:297px" width="6" height="11" viewBox="0 0 6 11"><polygon points="0,0 6,5.5 0,11" fill="#4a4a4a"/></svg>
<svg style="left:59px;top:296px" width="12" height="12" viewBox="0 0 12 12"><g transform="scale(1.000)"><rect x="0" y="0" width="5" height="5.6" fill="#5a9a3a"/><circle cx="8.9" cy="3" r="3" fill="#5a9a3a"/><rect x="0" y="6.9" width="5" height="5.1" fill="#5a9a3a"/><rect x="6.1" y="6.9" width="5.9" height="5.1" fill="#5a9a3a"/></g></svg>
<div class="t" style="left:75.00px;top:295px;font-size:13px;color:#000000;letter-spacing:-0.078px">AUDSYS</div>
<svg style="left:45px;top:320px" width="6" height="11" viewBox="0 0 6 11"><polygon points="0,0 6,5.5 0,11" fill="#4a4a4a"/></svg>
<svg style="left:59px;top:319px" width="12" height="12" viewBox="0 0 12 12"><g transform="scale(1.000)"><rect x="0" y="0" width="5" height="5.6" fill="#5a9a3a"/><circle cx="8.9" cy="3" r="3" fill="#5a9a3a"/><rect x="0" y="6.9" width="5" height="5.1" fill="#5a9a3a"/><rect x="6.1" y="6.9" width="5.9" height="5.1" fill="#5a9a3a"/></g></svg>
<div class="t" style="left:75.00px;top:318px;font-size:13px;color:#000000;letter-spacing:-0.118px">DBSFWUSER</div>
<svg style="left:45px;top:343px" width="6" height="11" viewBox="0 0 6 11"><polygon points="0,0 6,5.5 0,11" fill="#4a4a4a"/></svg>
<svg style="left:59px;top:342px" width="12" height="12" viewBox="0 0 12 12"><g transform="scale(1.000)"><rect x="0" y="0" width="5" height="5.6" fill="#5a9a3a"/><circle cx="8.9" cy="3" r="3" fill="#5a9a3a"/><rect x="0" y="6.9" width="5" height="5.1" fill="#5a9a3a"/><rect x="6.1" y="6.9" width="5.9" height="5.1" fill="#5a9a3a"/></g></svg>
<div class="t" style="left:75.00px;top:341px;font-size:13px;color:#000000;letter-spacing:0.109px">DIP</div>
<svg style="left:45px;top:366px" width="6" height="11" viewBox="0 0 6 11"><polygon points="0,0 6,5.5 0,11" fill="#4a4a4a"/></svg>
<svg style="left:59px;top:365px" width="12" height="12" viewBox="0 0 12 12"><g transform="scale(1.000)"><rect x="0" y="0" width="5" height="5.6" fill="#5a9a3a"/><circle cx="8.9" cy="3" r="3" fill="#5a9a3a"/><rect x="0" y="6.9" width="5" height="5.1" fill="#5a9a3a"/><rect x="6.1" y="6.9" width="5.9" height="5.1" fill="#5a9a3a"/></g></svg>
<div class="t" style="left:75.00px;top:364px;font-size:13px;color:#000000">DVF</div>
<svg style="left:45px;top:389px" width="6" height="11" viewBox="0 0 6 11"><polygon points="0,0 6,5.5 0,11" fill="#4a4a4a"/></svg>
<svg style="left:59px;top:388px" width="12" height="12" viewBox="0 0 12 12"><g transform="scale(1.000)"><rect x="0" y="0" width="5" height="5.6" fill="#5a9a3a"/><circle cx="8.9" cy="3" r="3" fill="#5a9a3a"/><rect x="0" y="6.9" width="5" height="5.1" fill="#5a9a3a"/><rect x="6.1" y="6.9" width="5.9" height="5.1" fill="#5a9a3a"/></g></svg>
<div class="t" style="left:75.00px;top:387px;font-size:13px;color:#000000;letter-spacing:-0.216px">DVSYS</div>
<svg style="left:45px;top:412px" width="6" height="11" viewBox="0 0 6 11"><polygon points="0,0 6,5.5 0,11" fill="#4a4a4a"/></svg>
<svg style="left:59px;top:411px" width="12" height="12" viewBox="0 0 12 12"><g transform="scale(1.000)"><rect x="0" y="0" width="5" height="5.6" fill="#5a9a3a"/><circle cx="8.9" cy="3" r="3" fill="#5a9a3a"/><rect x="0" y="6.9" width="5" height="5.1" fill="#5a9a3a"/><rect x="6.1" y="6.9" width="5.9" height="5.1" fill="#5a9a3a"/></g></svg>
<div class="t" style="left:75.00px;top:410px;font-size:13px;color:#000000;letter-spacing:-0.450px">GGSYS</div>
<svg style="left:45px;top:435px" width="6" height="11" viewBox="0 0 6 11"><polygon points="0,0 6,5.5 0,11" fill="#4a4a4a"/></svg>
<svg style="left:59px;top:434px" width="12" height="12" viewBox="0 0 12 12"><g transform="scale(1.000)"><rect x="0" y="0" width="5" height="5.6" fill="#5a9a3a"/><circle cx="8.9" cy="3" r="3" fill="#5a9a3a"/><rect x="0" y="6.9" width="5" height="5.1" fill="#5a9a3a"/><rect x="6.1" y="6.9" width="5.9" height="5.1" fill="#5a9a3a"/></g></svg>
<div class="t" style="left:75.00px;top:433px;font-size:13px;color:#000000;letter-spacing:0.057px">GSMADMIN_INTERNAL</div>
<svg style="left:45px;top:458px" width="6" height="11" viewBox="0 0 6 11"><polygon points="0,0 6,5.5 0,11" fill="#4a4a4a"/></svg>
<svg style="left:59px;top:457px" width="12" height="12" viewBox="0 0 12 12"><g transform="scale(1.000)"><rect x="0" y="0" width="5" height="5.6" fill="#5a9a3a"/><circle cx="8.9" cy="3" r="3" fill="#5a9a3a"/><rect x="0" y="6.9" width="5" height="5.1" fill="#5a9a3a"/><rect x="6.1" y="6.9" width="5.9" height="5.1" fill="#5a9a3a"/></g></svg>
<div class="t" style="left:75.00px;top:456px;font-size:13px;color:#000000;letter-spacing:-0.077px">GSMCATUSER</div>
<svg style="left:45px;top:481px" width="6" height="11" viewBox="0 0 6 11"><polygon points="0,0 6,5.5 0,11" fill="#4a4a4a"/></svg>
<svg style="left:59px;top:480px" width="12" height="12" viewBox="0 0 12 12"><g transform="scale(1.000)"><rect x="0" y="0" width="5" height="5.6" fill="#5a9a3a"/><circle cx="8.9" cy="3" r="3" fill="#5a9a3a"/><rect x="0" y="6.9" width="5" height="5.1" fill="#5a9a3a"/><rect x="6.1" y="6.9" width="5.9" height="5.1" fill="#5a9a3a"/></g></svg>
<div class="t" style="left:75.00px;top:479px;font-size:13px;color:#000000;letter-spacing:-0.209px">GSMROOTUSER</div>
<svg style="left:45px;top:504px" width="6" height="11" viewBox="0 0 6 11"><polygon points="0,0 6,5.5 0,11" fill="#4a4a4a"/></svg>
<svg style="left:59px;top:503px" width="12" height="12" viewBox="0 0 12 12"><g transform="scale(1.000)"><rect x="0" y="0" width="5" height="5.6" fill="#5a9a3a"/><circle cx="8.9" cy="3" r="3" fill="#5a9a3a"/><rect x="0" y="6.9" width="5" height="5.1" fill="#5a9a3a"/><rect x="6.1" y="6.9" width="5.9" height="5.1" fill="#5a9a3a"/></g></svg>
<div class="t" style="left:75.00px;top:502px;font-size:13px;color:#000000;letter-spacing:-0.248px">GSMUSER</div>
<svg style="left:43px;top:530px" width="10" height="6" viewBox="0 0 10 6"><polygon points="0,0 10,0 5,5.5" fill="#4a4a4a"/></svg>
<svg style="left:59px;top:526px" width="12" height="12" viewBox="0 0 12 12"><g transform="scale(1.000)"><rect x="0" y="0" width="5" height="5.6" fill="#5a9a3a"/><circle cx="8.9" cy="3" r="3" fill="#5a9a3a"/><rect x="0" y="6.9" width="5" height="5.1" fill="#5a9a3a"/><rect x="6.1" y="6.9" width="5.9" height="5.1" fill="#5a9a3a"/></g></svg>
<div class="t" style="left:75.00px;top:525px;font-size:13px;color:#000000;letter-spacing:0.109px">HR</div>
<svg style="left:61px;top:553px" width="10" height="6" viewBox="0 0 10 6"><polygon points="0,0 10,0 5,5.5" fill="#4a4a4a"/></svg>
<svg style="left:75.5px;top:547px" width="17" height="16" viewBox="0 0 17 16"><path d="M0.5 1.5 H6 L7.5 3 H14 V14.5 H0.5 Z" fill="#f2cf56"/><rect x="0.5" y="1" width="6" height="2.5" fill="#e6b82e"/><circle cx="11.5" cy="12" r="3.5" fill="#f2cf56" stroke="#c8901a" stroke-width="1"/><path d="M11.5 10 V12 L13 13" stroke="#c8901a" stroke-width="0.9" fill="none"/></svg>
<div class="t" style="left:93.00px;top:548px;font-size:13px;color:#000000;letter-spacing:0.904px">Tables</div>
<svg style="left:81px;top:573px" width="6" height="11" viewBox="0 0 6 11"><polygon points="0,0 6,5.5 0,11" fill="#4a4a4a"/></svg>
<svg style="left:94px;top:571px" width="15" height="15" viewBox="0 0 15 15"><rect x="0.5" y="0.5" width="6" height="6" rx="1" fill="none" stroke="#2f8fd8" stroke-width="1"/><rect x="1.5" y="3" width="4" height="3" fill="#f07a1a"/><rect x="8.5" y="0.5" width="6" height="6" rx="1" fill="none" stroke="#2f8fd8" stroke-width="1"/><rect x="9.5" y="3" width="4" height="3" fill="#ffffff" stroke="#2f8fd8" stroke-width="0.6"/><path d="M0.5 9 H14.5" stroke="#2f8fd8" stroke-width="1"/><rect x="0.5" y="11" width="5" height="3" fill="#f07a1a"/><rect x="7" y="11" width="7.5" height="3" fill="none" stroke="#2f8fd8" stroke-width="1"/></svg>
<div class="t" style="left:111.00px;top:571px;font-size:13px;color:#000000;letter-spacing:-0.062px">COUNTRIES</div>
<svg style="left:81px;top:596px" width="6" height="11" viewBox="0 0 6 11"><polygon points="0,0 6,5.5 0,11" fill="#4a4a4a"/></svg>
<svg style="left:94px;top:594px" width="14" height="14" viewBox="0 0 14 14">
<rect x="0" y="0" width="14" height="4" fill="#3f86f2"/>
<rect x="0" y="5" width="4" height="4" fill="#8ec4f2"/><rect x="5" y="5" width="4" height="4" fill="#8ec4f2"/><rect x="10" y="5" width="4" height="4" fill="#8ec4f2"/>
<rect x="0" y="10" width="4" height="4" fill="#8ec4f2"/><rect x="5" y="10" width="4" height="4" fill="#8ec4f2"/><rect x="10" y="10" width="4" height="4" fill="#8ec4f2"/>
</svg>
<div class="t" style="left:111.00px;top:594px;font-size:13px;color:#000000">DEPARTMENTS</div>
<svg style="left:79px;top:622px" width="10" height="6" viewBox="0 0 10 6"><polygon points="0,0 10,0 5,5.5" fill="#d6e4f4"/></svg>
<svg style="left:94px;top:617px" width="14" height="14" viewBox="0 0 14 14"><rect x="0" y="0" width="14" height="3" fill="#4a86e8"/><g fill="#b7d3f5"><rect x="0" y="4" width="4" height="4"/><rect x="5" y="4" width="4" height="4"/><rect x="10" y="4" width="4" height="4"/><rect x="0" y="9.5" width="4" height="4"/><rect x="5" y="9.5" width="4" height="4"/><rect x="10" y="9.5" width="4" height="4"/></g></svg>
<div class="t" style="left:111.00px;top:617px;font-size:13px;color:#ffffff;letter-spacing:-0.467px">EMPLOYEES</div>
<svg style="left:99px;top:642px" width="6" height="11" viewBox="0 0 6 11"><polygon points="0,0 6,5.5 0,11" fill="#4a4a4a"/></svg>
<svg style="left:111.5px;top:639px" width="17" height="16" viewBox="0 0 17 16"><path d="M0.5 1.5 H6 L7.5 3 H14 V14.5 H0.5 Z" fill="#f2cf56"/><rect x="0.5" y="1" width="6" height="2.5" fill="#e6b82e"/><path d="M8 10 H15 M11.5 10 V15.5 M10 15.5 H13" stroke="#c8901a" stroke-width="1.3" fill="none"/></svg>
<div class="t" style="left:129.00px;top:640px;font-size:13px;color:#000000;letter-spacing:0.815px">Columns</div>
<svg style="left:99px;top:665px" width="6" height="11" viewBox="0 0 6 11"><polygon points="0,0 6,5.5 0,11" fill="#4a4a4a"/></svg>
<svg style="left:111.5px;top:662px" width="17" height="16" viewBox="0 0 17 16"><path d="M0.5 1.5 H6 L7.5 3 H14 V14.5 H0.5 Z" fill="#f2cf56"/><rect x="0.5" y="1" width="6" height="2.5" fill="#e6b82e"/><rect x="7.5" y="8.5" width="8" height="7" fill="#ffffff" stroke="#c8901a" stroke-width="1"/><rect x="9.5" y="10.5" width="6" height="5" fill="#b47a10"/></svg>
<div class="t" style="left:129.00px;top:663px;font-size:13px;color:#000000;letter-spacing:0.750px">Constraints</div>
<svg style="left:99px;top:688px" width="6" height="11" viewBox="0 0 6 11"><polygon points="0,0 6,5.5 0,11" fill="#4a4a4a"/></svg>
<svg style="left:111.5px;top:685px" width="17" height="16" viewBox="0 0 17 16"><path d="M0.5 1.5 H6 L7.5 3 H14 V14.5 H0.5 Z" fill="#f2cf56"/><rect x="0.5" y="1" width="6" height="2.5" fill="#e6b82e"/><rect x="7.5" y="8" width="3.5" height="3.5" fill="#b47a10"/><rect x="10" y="11" width="5" height="5" fill="none" stroke="#b47a10" stroke-width="1.2"/><rect x="13" y="14" width="2.5" height="2" fill="#b47a10"/></svg>
<div class="t" style="left:129.00px;top:686px;font-size:13px;color:#000000;letter-spacing:0.617px">Foreign Keys</div>
<svg style="left:99px;top:711px" width="6" height="11" viewBox="0 0 6 11"><polygon points="0,0 6,5.5 0,11" fill="#4a4a4a"/></svg>
<svg style="left:111.5px;top:708px" width="17" height="16" viewBox="0 0 17 16"><path d="M0.5 1.5 H6 L7.5 3 H14 V14.5 H0.5 Z" fill="#f28a12"/><rect x="0.5" y="1" width="6" height="2.5" fill="#e47a08"/></svg>
<div class="t" style="left:129.00px;top:709px;font-size:13px;color:#000000;letter-spacing:0.779px">Indexes</div>
<svg style="left:81px;top:734px" width="6" height="11" viewBox="0 0 6 11"><polygon points="0,0 6,5.5 0,11" fill="#4a4a4a"/></svg>
<svg style="left:94px;top:732px" width="14" height="14" viewBox="0 0 14 14">
<rect x="0" y="0" width="14" height="4" fill="#3f86f2"/>
<rect x="0" y="5" width="4" height="4" fill="#8ec4f2"/><rect x="5" y="5" width="4" height="4" fill="#8ec4f2"/><rect x="10" y="5" width="4" height="4" fill="#8ec4f2"/>
<rect x="0" y="10" width="4" height="4" fill="#8ec4f2"/><rect x="5" y="10" width="4" height="4" fill="#8ec4f2"/><rect x="10" y="10" width="4" height="4" fill="#8ec4f2"/>
</svg>
<div class="t" style="left:111.00px;top:732px;font-size:13px;color:#000000;letter-spacing:-0.742px">JOBS</div>
<svg style="left:81px;top:757px" width="6" height="11" viewBox="0 0 6 11"><polygon points="0,0 6,5.5 0,11" fill="#4a4a4a"/></svg>
<svg style="left:94px;top:755px" width="14" height="14" viewBox="0 0 14 14">
<rect x="0" y="0" width="14" height="4" fill="#3f86f2"/>
<rect x="0" y="5" width="4" height="4" fill="#8ec4f2"/><rect x="5" y="5" width="4" height="4" fill="#8ec4f2"/><rect x="10" y="5" width="4" height="4" fill="#8ec4f2"/>
<rect x="0" y="10" width="4" height="4" fill="#8ec4f2"/><rect x="5" y="10" width="4" height="4" fill="#8ec4f2"/><rect x="10" y="10" width="4" height="4" fill="#8ec4f2"/>
</svg>
<div class="t" style="left:111.00px;top:755px;font-size:13px;color:#000000;letter-spacing:-0.348px">JOB_HISTORY</div>
<svg style="left:81px;top:780px" width="6" height="11" viewBox="0 0 6 11"><polygon points="0,0 6,5.5 0,11" fill="#4a4a4a"/></svg>
<svg style="left:94px;top:778px" width="14" height="14" viewBox="0 0 14 14">
<rect x="0" y="0" width="14" height="4" fill="#3f86f2"/>
<rect x="0" y="5" width="4" height="4" fill="#8ec4f2"/><rect x="5" y="5" width="4" height="4" fill="#8ec4f2"/><rect x="10" y="5" width="4" height="4" fill="#8ec4f2"/>
<rect x="0" y="10" width="4" height="4" fill="#8ec4f2"/><rect x="5" y="10" width="4" height="4" fill="#8ec4f2"/><rect x="10" y="10" width="4" height="4" fill="#8ec4f2"/>
</svg>
<div class="t" style="left:111.00px;top:778px;font-size:13px;color:#000000;letter-spacing:0.092px">LOCATIONS</div>
<svg style="left:81px;top:803px" width="6" height="11" viewBox="0 0 6 11"><polygon points="0,0 6,5.5 0,11" fill="#4a4a4a"/></svg>
<svg style="left:94px;top:801px" width="14" height="14" viewBox="0 0 14 14">
<rect x="0" y="0" width="14" height="4" fill="#3f86f2"/>
<rect x="0" y="5" width="4" height="4" fill="#8ec4f2"/><rect x="5" y="5" width="4" height="4" fill="#8ec4f2"/><rect x="10" y="5" width="4" height="4" fill="#8ec4f2"/>
<rect x="0" y="10" width="4" height="4" fill="#8ec4f2"/><rect x="5" y="10" width="4" height="4" fill="#8ec4f2"/><rect x="10" y="10" width="4" height="4" fill="#8ec4f2"/>
</svg>
<div class="t" style="left:111.00px;top:801px;font-size:13px;color:#000000;letter-spacing:-0.138px">REGIONS</div>
<svg style="left:63px;top:826px" width="6" height="11" viewBox="0 0 6 11"><polygon points="0,0 6,5.5 0,11" fill="#4a4a4a"/></svg>
<svg style="left:75.5px;top:823px" width="17" height="16" viewBox="0 0 17 16"><path d="M0.5 1.5 H6 L7.5 3 H14 V14.5 H0.5 Z" fill="#f2cf56"/><rect x="0.5" y="1" width="6" height="2.5" fill="#e6b82e"/><rect x="8" y="9" width="7.5" height="6.5" fill="#ffffff" stroke="#c8901a" stroke-width="1"/><path d="M10 11.5 H14 M10 13.5 H14 M10 11 V14" stroke="#c8901a" stroke-width="0.9"/></svg>
<div class="t" style="left:93.00px;top:824px;font-size:13px;color:#000000;letter-spacing:0.909px">Views</div>
<svg style="left:63px;top:849px" width="6" height="11" viewBox="0 0 6 11"><polygon points="0,0 6,5.5 0,11" fill="#4a4a4a"/></svg>
<svg style="left:75.5px;top:846px" width="17" height="16" viewBox="0 0 17 16"><path d="M0.5 1.5 H6 L7.5 3 H14 V14.5 H0.5 Z" fill="#f2cf56"/><rect x="0.5" y="1" width="6" height="2.5" fill="#e6b82e"/><rect x="8" y="9" width="7.5" height="6.5" fill="#ffffff" stroke="#c8901a" stroke-width="1"/><path d="M10 11.5 H14 M10 13.5 H14 M10 11 V14" stroke="#c8901a" stroke-width="0.9"/></svg>
<div class="t" style="left:93.00px;top:847px;font-size:13px;color:#000000;letter-spacing:0.826px">Materialized Views</div>
<svg style="left:63px;top:872px" width="6" height="11" viewBox="0 0 6 11"><polygon points="0,0 6,5.5 0,11" fill="#4a4a4a"/></svg>
<svg style="left:75.5px;top:869px" width="17" height="16" viewBox="0 0 17 16"><path d="M0.5 1.5 H6 L7.5 3 H14 V14.5 H0.5 Z" fill="#f2cf56"/><rect x="0.5" y="1" width="6" height="2.5" fill="#e6b82e"/><rect x="8" y="9" width="5" height="6.5" fill="#b47a10"/><path d="M14 11 V15.5 H16" stroke="#b47a10" stroke-width="1" fill="none"/></svg>
<div class="t" style="left:93.00px;top:870px;font-size:13px;color:#000000;letter-spacing:0.549px">Sequences</div>
<svg style="left:63px;top:895px" width="6" height="11" viewBox="0 0 6 11"><polygon points="0,0 6,5.5 0,11" fill="#4a4a4a"/></svg>
<svg style="left:75.5px;top:892px" width="17" height="16" viewBox="0 0 17 16"><path d="M0.5 1.5 H6 L7.5 3 H14 V14.5 H0.5 Z" fill="#f2cf56"/><rect x="0.5" y="1" width="6" height="2.5" fill="#e6b82e"/><g fill="#b47a10"><rect x="8.5" y="9" width="3" height="3"/><rect x="12.5" y="9" width="3" height="3"/><rect x="8.5" y="13" width="3" height="3"/><rect x="12.5" y="13" width="3" height="3"/></g></svg>
<div class="t" style="left:93.00px;top:893px;font-size:13px;color:#000000;letter-spacing:0.863px">Types</div>
<svg style="left:63px;top:918px" width="6" height="11" viewBox="0 0 6 11"><polygon points="0,0 6,5.5 0,11" fill="#4a4a4a"/></svg>
<svg style="left:75.5px;top:915px" width="17" height="16" viewBox="0 0 17 16"><path d="M0.5 1.5 H6 L7.5 3 H14 V14.5 H0.5 Z" fill="#f2cf56"/><rect x="0.5" y="1" width="6" height="2.5" fill="#e6b82e"/><path d="M5.5 7 L3.5 9 L5.5 11 M9.5 7 L11.5 9 L9.5 11 M8.5 6.5 L6.5 11.5" stroke="#c8901a" stroke-width="0.9" fill="none"/></svg>
<div class="t" style="left:93.00px;top:916px;font-size:13px;color:#000000;letter-spacing:0.613px">Packages</div>
<svg style="left:63px;top:941px" width="6" height="11" viewBox="0 0 6 11"><polygon points="0,0 6,5.5 0,11" fill="#4a4a4a"/></svg>
<svg style="left:75.5px;top:938px" width="17" height="16" viewBox="0 0 17 16"><path d="M0.5 1.5 H6 L7.5 3 H14 V14.5 H0.5 Z" fill="#f2cf56"/><rect x="0.5" y="1" width="6" height="2.5" fill="#e6b82e"/><ellipse cx="11.5" cy="10.5" rx="3.8" ry="1.6" fill="#c8901a"/><path d="M7.7 10.5 V14 A3.8 1.6 0 0 0 15.3 14 V10.5" fill="#c8901a"/><path d="M7.7 11.8 A3.8 1.6 0 0 0 15.3 11.8" stroke="#f8e2a8" stroke-width="0.8" fill="none"/></svg>
<div class="t" style="left:93.00px;top:939px;font-size:13px;color:#000000;letter-spacing:0.552px">Procedures</div>
<svg style="left:63px;top:964px" width="6" height="11" viewBox="0 0 6 11"><polygon points="0,0 6,5.5 0,11" fill="#4a4a4a"/></svg>
<svg style="left:75.5px;top:961px" width="17" height="16" viewBox="0 0 17 16"><path d="M0.5 1.5 H6 L7.5 3 H14 V14.5 H0.5 Z" fill="#f2cf56"/><rect x="0.5" y="1" width="6" height="2.5" fill="#e6b82e"/><path d="M8 16 C9.5 16 9.5 9 11.5 9 M8.5 12 H11.5 M11 12 L14.5 16 M14.5 12 L11 16" stroke="#c8901a" stroke-width="1" fill="none"/></svg>
<div class="t" style="left:93.00px;top:962px;font-size:13px;color:#000000;letter-spacing:0.625px">Functions</div>
<svg style="left:63px;top:987px" width="6" height="11" viewBox="0 0 6 11"><polygon points="0,0 6,5.5 0,11" fill="#4a4a4a"/></svg>
<svg style="left:75.5px;top:984px" width="17" height="16" viewBox="0 0 17 16"><path d="M0.5 1.5 H6 L7.5 3 H14 V14.5 H0.5 Z" fill="#f2cf56"/><rect x="0.5" y="1" width="6" height="2.5" fill="#e6b82e"/><path d="M9 16 L11.5 10 L14 16 M10 14 H13" stroke="#c8901a" stroke-width="1.1" fill="none"/></svg>
<div class="t" style="left:93.00px;top:985px;font-size:13px;color:#000000;letter-spacing:0.912px">Synonyms</div>
<svg style="left:45px;top:1010px" width="6" height="11" viewBox="0 0 6 11"><polygon points="0,0 6,5.5 0,11" fill="#4a4a4a"/></svg>
<svg style="left:59px;top:1009px" width="12" height="12" viewBox="0 0 12 12"><g transform="scale(1.000)"><rect x="0" y="0" width="5" height="5.6" fill="#5a9a3a"/><circle cx="8.9" cy="3" r="3" fill="#5a9a3a"/><rect x="0" y="6.9" width="5" height="5.1" fill="#5a9a3a"/><rect x="6.1" y="6.9" width="5.9" height="5.1" fill="#5a9a3a"/></g></svg>
<div class="t" style="left:75.00px;top:1008px;font-size:13px;color:#000000;letter-spacing:-0.283px">LBACSYS</div>
<svg style="left:45px;top:1033px" width="6" height="11" viewBox="0 0 6 11"><polygon points="0,0 6,5.5 0,11" fill="#4a4a4a"/></svg>
<svg style="left:59px;top:1032px" width="12" height="12" viewBox="0 0 12 12"><g transform="scale(1.000)"><rect x="0" y="0" width="5" height="5.6" fill="#5a9a3a"/><circle cx="8.9" cy="3" r="3" fill="#5a9a3a"/><rect x="0" y="6.9" width="5" height="5.1" fill="#5a9a3a"/><rect x="6.1" y="6.9" width="5.9" height="5.1" fill="#5a9a3a"/></g></svg>
<div class="t" style="left:75.00px;top:1031px;font-size:13px;color:#000000;letter-spacing:-0.589px">OJVMSYS</div>
<div style="left:580px;top:220px;width:1340px;height:821px;background:#ffffff;"></div>
<div style="left:579px;top:219px;width:1341px;height:1px;background:#c6c2bd;"></div>
<div style="left:580px;top:220px;width:1340px;height:27px;background:#e8e8e8;"></div>
<div style="left:612px;top:220px;width:137px;height:27px;background:#a7c8ec;"></div>
<div style="left:580px;top:247px;width:1340px;height:1px;background:#000000;"></div>
<div style="left:611px;top:220px;width:1px;height:27px;background:#000000;"></div>
<div style="left:749px;top:220px;width:1px;height:27px;background:#000000;"></div>
<div style="left:880px;top:220px;width:1px;height:27px;background:#000000;"></div>
<div style="left:1007px;top:220px;width:1px;height:27px;background:#000000;"></div>
<div style="left:1100px;top:220px;width:1px;height:27px;background:#000000;"></div>
<div style="left:1256px;top:220px;width:1px;height:27px;background:#000000;"></div>
<div style="left:1400px;top:220px;width:1px;height:27px;background:#000000;"></div>
<div style="left:1496px;top:220px;width:1px;height:27px;background:#000000;"></div>
<div style="left:1597px;top:220px;width:1px;height:27px;background:#000000;"></div>
<div style="left:1760px;top:220px;width:1px;height:27px;background:#000000;"></div>
<div style="left:1895px;top:220px;width:1px;height:27px;background:#000000;"></div>
<div class="t" style="left:617.50px;top:227px;font-size:11px;color:#1a8fd0;letter-spacing:-0.300px">123</div>
<div class="t" style="left:637.00px;top:227px;font-size:12px;color:#000000;letter-spacing:-0.155px">EMPLOYEE_ID</div>
<svg style="left:730px;top:225px" width="17" height="17" viewBox="0 0 17 17"><path d="M0.6 2.5 H8.4 V4.3 L6.2 6.8 V14.8 L3.6 12.2 V6.8 L0.6 4.3 Z" fill="#8fcdf2" stroke="#2489d2" stroke-width="1.1" stroke-linejoin="round"/><g fill="#2489d2"><polygon points="10,5.3 13.2,1.8 16.4,5.3"/><rect x="12.3" y="5" width="1.8" height="3"/><rect x="12.3" y="10" width="1.8" height="3"/><polygon points="10,12.8 13.2,16.4 16.4,12.8"/></g></svg>
<svg style="left:756px;top:230px" width="17" height="8" viewBox="0 0 17 8"><g fill="#1f8ad2"><rect x="0" y="1.2" width="1.7" height="6.3"/><rect x="3.8" y="1.2" width="1.7" height="6.3"/><rect x="0.9" y="0" width="3.7" height="1.6"/><rect x="0" y="4" width="5.5" height="1.4"/><rect x="6.5" y="0" width="1.7" height="7.5"/><rect x="6.5" y="0" width="3.8" height="1.5"/><rect x="6.5" y="3.3" width="4" height="1.4"/><rect x="6.5" y="6" width="4.2" height="1.5"/><rect x="9.6" y="0.8" width="1.7" height="2.7"/><rect x="10" y="4.2" width="1.7" height="2.5"/><rect x="12.6" y="0.8" width="1.7" height="5.9"/><rect x="13.4" y="0" width="3.3" height="1.5"/><rect x="13.4" y="6" width="3.3" height="1.5"/><rect x="15.2" y="1.2" width="1.6" height="1.2"/><rect x="15.2" y="5.1" width="1.6" height="1.2"/></g></svg>
<div class="t" style="left:775.00px;top:227px;font-size:12px;color:#000000;letter-spacing:-0.102px">FIRST_NAME</div>
<svg style="left:861px;top:225px" width="17" height="17" viewBox="0 0 17 17"><path d="M0.6 2.5 H8.4 V4.3 L6.2 6.8 V14.8 L3.6 12.2 V6.8 L0.6 4.3 Z" fill="#8fcdf2" stroke="#2489d2" stroke-width="1.1" stroke-linejoin="round"/><g fill="#2489d2"><polygon points="10,5.3 13.2,1.8 16.4,5.3"/><rect x="12.3" y="5" width="1.8" height="3"/><rect x="12.3" y="10" width="1.8" height="3"/><polygon points="10,12.8 13.2,16.4 16.4,12.8"/></g></svg>
<svg style="left:887px;top:230px" width="17" height="8" viewBox="0 0 17 8"><g fill="#1f8ad2"><rect x="0" y="1.2" width="1.7" height="6.3"/><rect x="3.8" y="1.2" width="1.7" height="6.3"/><rect x="0.9" y="0" width="3.7" height="1.6"/><rect x="0" y="4" width="5.5" height="1.4"/><rect x="6.5" y="0" width="1.7" height="7.5"/><rect x="6.5" y="0" width="3.8" height="1.5"/><rect x="6.5" y="3.3" width="4" height="1.4"/><rect x="6.5" y="6" width="4.2" height="1.5"/><rect x="9.6" y="0.8" width="1.7" height="2.7"/><rect x="10" y="4.2" width="1.7" height="2.5"/><rect x="12.6" y="0.8" width="1.7" height="5.9"/><rect x="13.4" y="0" width="3.3" height="1.5"/><rect x="13.4" y="6" width="3.3" height="1.5"/><rect x="15.2" y="1.2" width="1.6" height="1.2"/><rect x="15.2" y="5.1" width="1.6" height="1.2"/></g></svg>
<div class="t" style="left:906.00px;top:227px;font-size:12px;color:#000000;letter-spacing:-0.040px">LAST_NAME</div>
<svg style="left:988px;top:225px" width="17" height="17" viewBox="0 0 17 17"><path d="M0.6 2.5 H8.4 V4.3 L6.2 6.8 V14.8 L3.6 12.2 V6.8 L0.6 4.3 Z" fill="#8fcdf2" stroke="#2489d2" stroke-width="1.1" stroke-linejoin="round"/><g fill="#2489d2"><polygon points="10,5.3 13.2,1.8 16.4,5.3"/><rect x="12.3" y="5" width="1.8" height="3"/><rect x="12.3" y="10" width="1.8" height="3"/><polygon points="10,12.8 13.2,16.4 16.4,12.8"/></g></svg>
<svg style="left:1014px;top:230px" width="17" height="8" viewBox="0 0 17 8"><g fill="#1f8ad2"><rect x="0" y="1.2" width="1.7" height="6.3"/><rect x="3.8" y="1.2" width="1.7" height="6.3"/><rect x="0.9" y="0" width="3.7" height="1.6"/><rect x="0" y="4" width="5.5" height="1.4"/><rect x="6.5" y="0" width="1.7" height="7.5"/><rect x="6.5" y="0" width="3.8" height="1.5"/><rect x="6.5" y="3.3" width="4" height="1.4"/><rect x="6.5" y="6" width="4.2" height="1.5"/><rect x="9.6" y="0.8" width="1.7" height="2.7"/><rect x="10" y="4.2" width="1.7" height="2.5"/><rect x="12.6" y="0.8" width="1.7" height="5.9"/><rect x="13.4" y="0" width="3.3" height="1.5"/><rect x="13.4" y="6" width="3.3" height="1.5"/><rect x="15.2" y="1.2" width="1.6" height="1.2"/><rect x="15.2" y="5.1" width="1.6" height="1.2"/></g></svg>
<div class="t" style="left:1033.00px;top:227px;font-size:12px;color:#000000;letter-spacing:0.197px">EMAIL</div>
<svg style="left:1081px;top:225px" width="17" height="17" viewBox="0 0 17 17"><path d="M0.6 2.5 H8.4 V4.3 L6.2 6.8 V14.8 L3.6 12.2 V6.8 L0.6 4.3 Z" fill="#8fcdf2" stroke="#2489d2" stroke-width="1.1" stroke-linejoin="round"/><g fill="#2489d2"><polygon points="10,5.3 13.2,1.8 16.4,5.3"/><rect x="12.3" y="5" width="1.8" height="3"/><rect x="12.3" y="10" width="1.8" height="3"/><polygon points="10,12.8 13.2,16.4 16.4,12.8"/></g></svg>
<svg style="left:1107px;top:230px" width="17" height="8" viewBox="0 0 17 8"><g fill="#1f8ad2"><rect x="0" y="1.2" width="1.7" height="6.3"/><rect x="3.8" y="1.2" width="1.7" height="6.3"/><rect x="0.9" y="0" width="3.7" height="1.6"/><rect x="0" y="4" width="5.5" height="1.4"/><rect x="6.5" y="0" width="1.7" height="7.5"/><rect x="6.5" y="0" width="3.8" height="1.5"/><rect x="6.5" y="3.3" width="4" height="1.4"/><rect x="6.5" y="6" width="4.2" height="1.5"/><rect x="9.6" y="0.8" width="1.7" height="2.7"/><rect x="10" y="4.2" width="1.7" height="2.5"/><rect x="12.6" y="0.8" width="1.7" height="5.9"/><rect x="13.4" y="0" width="3.3" height="1.5"/><rect x="13.4" y="6" width="3.3" height="1.5"/><rect x="15.2" y="1.2" width="1.6" height="1.2"/><rect x="15.2" y="5.1" width="1.6" height="1.2"/></g></svg>
<div class="t" style="left:1126.00px;top:227px;font-size:12px;color:#000000;letter-spacing:-0.113px">PHONE_NUMBER</div>
<svg style="left:1237px;top:225px" width="17" height="17" viewBox="0 0 17 17"><path d="M0.6 2.5 H8.4 V4.3 L6.2 6.8 V14.8 L3.6 12.2 V6.8 L0.6 4.3 Z" fill="#8fcdf2" stroke="#2489d2" stroke-width="1.1" stroke-linejoin="round"/><g fill="#2489d2"><polygon points="10,5.3 13.2,1.8 16.4,5.3"/><rect x="12.3" y="5" width="1.8" height="3"/><rect x="12.3" y="10" width="1.8" height="3"/><polygon points="10,12.8 13.2,16.4 16.4,12.8"/></g></svg>
<svg style="left:1263px;top:226px" width="15" height="15" viewBox="0 0 15 15"><circle cx="7.5" cy="7.5" r="7" fill="#3a8ee0"/><path d="M7.5 3.5 V7.8 L4.5 10" stroke="#ffffff" stroke-width="1.4" fill="none"/></svg>
<div class="t" style="left:1282.00px;top:227px;font-size:12px;color:#000000;letter-spacing:0.059px">HIRE_DATE</div>
<svg style="left:1381px;top:225px" width="17" height="17" viewBox="0 0 17 17"><path d="M0.6 2.5 H8.4 V4.3 L6.2 6.8 V14.8 L3.6 12.2 V6.8 L0.6 4.3 Z" fill="#8fcdf2" stroke="#2489d2" stroke-width="1.1" stroke-linejoin="round"/><g fill="#2489d2"><polygon points="10,5.3 13.2,1.8 16.4,5.3"/><rect x="12.3" y="5" width="1.8" height="3"/><rect x="12.3" y="10" width="1.8" height="3"/><polygon points="10,12.8 13.2,16.4 16.4,12.8"/></g></svg>
<svg style="left:1407px;top:230px" width="17" height="8" viewBox="0 0 17 8"><g fill="#1f8ad2"><rect x="0" y="1.2" width="1.7" height="6.3"/><rect x="3.8" y="1.2" width="1.7" height="6.3"/><rect x="0.9" y="0" width="3.7" height="1.6"/><rect x="0" y="4" width="5.5" height="1.4"/><rect x="6.5" y="0" width="1.7" height="7.5"/><rect x="6.5" y="0" width="3.8" height="1.5"/><rect x="6.5" y="3.3" width="4" height="1.4"/><rect x="6.5" y="6" width="4.2" height="1.5"/><rect x="9.6" y="0.8" width="1.7" height="2.7"/><rect x="10" y="4.2" width="1.7" height="2.5"/><rect x="12.6" y="0.8" width="1.7" height="5.9"/><rect x="13.4" y="0" width="3.3" height="1.5"/><rect x="13.4" y="6" width="3.3" height="1.5"/><rect x="15.2" y="1.2" width="1.6" height="1.2"/><rect x="15.2" y="5.1" width="1.6" height="1.2"/></g></svg>
<div class="t" style="left:1426.00px;top:227px;font-size:12px;color:#000000;letter-spacing:-0.336px">JOB_ID</div>
<svg style="left:1477px;top:225px" width="17" height="17" viewBox="0 0 17 17"><path d="M0.6 2.5 H8.4 V4.3 L6.2 6.8 V14.8 L3.6 12.2 V6.8 L0.6 4.3 Z" fill="#8fcdf2" stroke="#2489d2" stroke-width="1.1" stroke-linejoin="round"/><g fill="#2489d2"><polygon points="10,5.3 13.2,1.8 16.4,5.3"/><rect x="12.3" y="5" width="1.8" height="3"/><rect x="12.3" y="10" width="1.8" height="3"/><polygon points="10,12.8 13.2,16.4 16.4,12.8"/></g></svg>
<div class="t" style="left:1502.50px;top:227px;font-size:11px;color:#1a8fd0;letter-spacing:-0.300px">123</div>
<div class="t" style="left:1522.00px;top:227px;font-size:12px;color:#000000;letter-spacing:-0.190px">SALARY</div>
<svg style="left:1578px;top:225px" width="17" height="17" viewBox="0 0 17 17"><path d="M0.6 2.5 H8.4 V4.3 L6.2 6.8 V14.8 L3.6 12.2 V6.8 L0.6 4.3 Z" fill="#8fcdf2" stroke="#2489d2" stroke-width="1.1" stroke-linejoin="round"/><g fill="#2489d2"><polygon points="10,5.3 13.2,1.8 16.4,5.3"/><rect x="12.3" y="5" width="1.8" height="3"/><rect x="12.3" y="10" width="1.8" height="3"/><polygon points="10,12.8 13.2,16.4 16.4,12.8"/></g></svg>
<div class="t" style="left:1603.50px;top:227px;font-size:11px;color:#1a8fd0;letter-spacing:-0.300px">123</div>
<div class="t" style="left:1623.00px;top:227px;font-size:12px;color:#000000;letter-spacing:-0.167px">COMMISSION_PCT</div>
<svg style="left:1741px;top:225px" width="17" height="17" viewBox="0 0 17 17"><path d="M0.6 2.5 H8.4 V4.3 L6.2 6.8 V14.8 L3.6 12.2 V6.8 L0.6 4.3 Z" fill="#8fcdf2" stroke="#2489d2" stroke-width="1.1" stroke-linejoin="round"/><g fill="#2489d2"><polygon points="10,5.3 13.2,1.8 16.4,5.3"/><rect x="12.3" y="5" width="1.8" height="3"/><rect x="12.3" y="10" width="1.8" height="3"/><polygon points="10,12.8 13.2,16.4 16.4,12.8"/></g></svg>
<div class="t" style="left:1766.50px;top:227px;font-size:11px;color:#1a8fd0;letter-spacing:-0.300px">123</div>
<div class="t" style="left:1786.00px;top:227px;font-size:12px;color:#000000;letter-spacing:-0.036px">MANAGER_ID</div>
<svg style="left:1876px;top:225px" width="17" height="17" viewBox="0 0 17 17"><path d="M0.6 2.5 H8.4 V4.3 L6.2 6.8 V14.8 L3.6 12.2 V6.8 L0.6 4.3 Z" fill="#8fcdf2" stroke="#2489d2" stroke-width="1.1" stroke-linejoin="round"/><g fill="#2489d2"><polygon points="10,5.3 13.2,1.8 16.4,5.3"/><rect x="12.3" y="5" width="1.8" height="3"/><rect x="12.3" y="10" width="1.8" height="3"/><polygon points="10,12.8 13.2,16.4 16.4,12.8"/></g></svg>
<div class="t" style="left:1901.50px;top:227px;font-size:11px;color:#1a8fd0;letter-spacing:-0.300px">123</div>
<div style="left:612px;top:248px;width:1308px;height:18px;background:#c6d9ef;"></div>
<div style="left:580px;top:248px;width:31px;height:18px;background:#a7c8ec;"></div>
<div style="left:580px;top:266px;width:32px;height:1px;background:#000000;"></div>
<div style="left:612px;top:266px;width:1308px;height:1px;background:#f1efec;"></div>
<div class="t" style="left:584.00px;top:251px;font-size:12px;color:#000000;letter-spacing:1.312px;font-weight:bold">1</div>
<div style="left:612px;top:248px;width:137px;height:18px;background:#000000;"></div>
<div style="left:614px;top:250px;width:133px;height:14px;background:#a9cdf5;"></div>
<div style="left:615px;top:251px;width:131px;height:12px;background:#92b5e2;"></div>
<div class="t" style="left:719.32px;top:250px;font-size:12px;color:#ffffff;letter-spacing:1.323px">100</div>
<div class="t" style="left:755.00px;top:250px;font-size:12px;color:#000000;letter-spacing:0.773px">Steven</div>
<div class="t" style="left:886.00px;top:250px;font-size:12px;color:#000000;letter-spacing:0.742px">King</div>
<div class="t" style="left:1013.00px;top:250px;font-size:12px;color:#000000;letter-spacing:0.131px">SKING</div>
<div class="t" style="left:1106.00px;top:250px;font-size:12px;color:#000000;letter-spacing:1.216px">515.123.4567</div>
<div class="t" style="left:1262.60px;top:250px;font-size:12px;color:#000000;letter-spacing:1.082px">2003-06-17 00:00:00</div>
<div class="t" style="left:1406.00px;top:250px;font-size:12px;color:#000000;letter-spacing:-0.290px">AD_PRES</div>
<div class="t" style="left:1547.22px;top:250px;font-size:12px;color:#000000;letter-spacing:1.216px">24,000</div>
<div class="t" style="left:1711.77px;top:250px;font-size:12px;color:#9b9b9b;letter-spacing:0.773px">[NULL]</div>
<div class="t" style="left:1846.77px;top:250px;font-size:12px;color:#9b9b9b;letter-spacing:0.773px">[NULL]</div>
<div style="left:612px;top:267px;width:1308px;height:18px;background:#ffffff;"></div>
<div style="left:580px;top:267px;width:31px;height:18px;background:#e8e8e8;"></div>
<div style="left:580px;top:285px;width:32px;height:1px;background:#000000;"></div>
<div style="left:612px;top:285px;width:1308px;height:1px;background:#f1efec;"></div>
<div class="t" style="left:584.00px;top:270px;font-size:12px;color:#000000;letter-spacing:1.312px">2</div>
<div class="t" style="left:719.32px;top:269px;font-size:12px;color:#000000;letter-spacing:1.323px">101</div>
<div class="t" style="left:755.00px;top:269px;font-size:12px;color:#000000;letter-spacing:0.525px">Neena</div>
<div class="t" style="left:886.00px;top:269px;font-size:12px;color:#000000;letter-spacing:0.757px">Kochhar</div>
<div class="t" style="left:1013.00px;top:269px;font-size:12px;color:#000000;letter-spacing:-0.084px">NKOCHHAR</div>
<div class="t" style="left:1106.00px;top:269px;font-size:12px;color:#000000;letter-spacing:1.216px">515.123.4568</div>
<div class="t" style="left:1262.60px;top:269px;font-size:12px;color:#000000;letter-spacing:1.082px">2005-09-21 00:00:00</div>
<div class="t" style="left:1406.00px;top:269px;font-size:12px;color:#000000;letter-spacing:-0.272px">AD_VP</div>
<div class="t" style="left:1547.22px;top:269px;font-size:12px;color:#000000;letter-spacing:1.216px">17,000</div>
<div class="t" style="left:1711.77px;top:269px;font-size:12px;color:#9b9b9b;letter-spacing:0.773px">[NULL]</div>
<div class="t" style="left:1865.32px;top:269px;font-size:12px;color:#000000;letter-spacing:1.323px">100</div>
<div style="left:612px;top:286px;width:1308px;height:18px;background:#dce6f2;"></div>
<div style="left:580px;top:286px;width:31px;height:18px;background:#e8e8e8;"></div>
<div style="left:580px;top:304px;width:32px;height:1px;background:#000000;"></div>
<div style="left:612px;top:304px;width:1308px;height:1px;background:#f1efec;"></div>
<div class="t" style="left:584.00px;top:289px;font-size:12px;color:#000000;letter-spacing:1.312px">3</div>
<div class="t" style="left:719.32px;top:288px;font-size:12px;color:#000000;letter-spacing:1.323px">102</div>
<div class="t" style="left:755.00px;top:288px;font-size:12px;color:#000000;letter-spacing:0.547px">Lex</div>
<div class="t" style="left:886.00px;top:288px;font-size:12px;color:#000000;letter-spacing:0.518px">De Haan</div>
<div class="t" style="left:1013.00px;top:288px;font-size:12px;color:#000000;letter-spacing:0.188px">LDEHAAN</div>
<div class="t" style="left:1106.00px;top:288px;font-size:12px;color:#000000;letter-spacing:1.216px">515.123.4569</div>
<div class="t" style="left:1262.60px;top:288px;font-size:12px;color:#000000;letter-spacing:1.082px">2001-01-13 00:00:00</div>
<div class="t" style="left:1406.00px;top:288px;font-size:12px;color:#000000;letter-spacing:-0.272px">AD_VP</div>
<div class="t" style="left:1547.22px;top:288px;font-size:12px;color:#000000;letter-spacing:1.216px">17,000</div>
<div class="t" style="left:1711.77px;top:288px;font-size:12px;color:#9b9b9b;letter-spacing:0.773px">[NULL]</div>
<div class="t" style="left:1865.32px;top:288px;font-size:12px;color:#000000;letter-spacing:1.323px">100</div>
<div style="left:612px;top:305px;width:1308px;height:18px;background:#ffffff;"></div>
<div style="left:580px;top:305px;width:31px;height:18px;background:#e8e8e8;"></div>
<div style="left:580px;top:323px;width:32px;height:1px;background:#000000;"></div>
<div style="left:612px;top:323px;width:1308px;height:1px;background:#f1efec;"></div>
<div class="t" style="left:584.00px;top:308px;font-size:12px;color:#000000;letter-spacing:1.312px">4</div>
<div class="t" style="left:719.32px;top:307px;font-size:12px;color:#000000;letter-spacing:1.323px">103</div>
<div class="t" style="left:755.00px;top:307px;font-size:12px;color:#000000;letter-spacing:0.661px">Alexander</div>
<div class="t" style="left:886.00px;top:307px;font-size:12px;color:#000000;letter-spacing:0.828px">Hunold</div>
<div class="t" style="left:1013.00px;top:307px;font-size:12px;color:#000000;letter-spacing:0.188px">AHUNOLD</div>
<div class="t" style="left:1106.00px;top:307px;font-size:12px;color:#000000;letter-spacing:1.216px">590.423.4567</div>
<div class="t" style="left:1262.60px;top:307px;font-size:12px;color:#000000;letter-spacing:1.082px">2006-01-03 00:00:00</div>
<div class="t" style="left:1406.00px;top:307px;font-size:12px;color:#000000;letter-spacing:-0.384px">IT_PROG</div>
<div class="t" style="left:1555.19px;top:307px;font-size:12px;color:#000000;letter-spacing:1.194px">9,000</div>
<div class="t" style="left:1711.77px;top:307px;font-size:12px;color:#9b9b9b;letter-spacing:0.773px">[NULL]</div>
<div class="t" style="left:1865.32px;top:307px;font-size:12px;color:#000000;letter-spacing:1.323px">102</div>
<div style="left:612px;top:324px;width:1308px;height:18px;background:#dce6f2;"></div>
<div style="left:580px;top:324px;width:31px;height:18px;background:#e8e8e8;"></div>
<div style="left:580px;top:342px;width:32px;height:1px;background:#000000;"></div>
<div style="left:612px;top:342px;width:1308px;height:1px;background:#f1efec;"></div>
<div class="t" style="left:584.00px;top:327px;font-size:12px;color:#000000;letter-spacing:1.312px">5</div>
<div class="t" style="left:719.32px;top:326px;font-size:12px;color:#000000;letter-spacing:1.323px">104</div>
<div class="t" style="left:755.00px;top:326px;font-size:12px;color:#000000;letter-spacing:0.728px">Bruce</div>
<div class="t" style="left:886.00px;top:326px;font-size:12px;color:#000000;letter-spacing:0.797px">Ernst</div>
<div class="t" style="left:1013.00px;top:326px;font-size:12px;color:#000000;letter-spacing:-0.115px">BERNST</div>
<div class="t" style="left:1106.00px;top:326px;font-size:12px;color:#000000;letter-spacing:1.216px">590.423.4568</div>
<div class="t" style="left:1262.60px;top:326px;font-size:12px;color:#000000;letter-spacing:1.082px">2007-05-21 00:00:00</div>
<div class="t" style="left:1406.00px;top:326px;font-size:12px;color:#000000;letter-spacing:-0.384px">IT_PROG</div>
<div class="t" style="left:1555.19px;top:326px;font-size:12px;color:#000000;letter-spacing:1.194px">6,000</div>
<div class="t" style="left:1711.77px;top:326px;font-size:12px;color:#9b9b9b;letter-spacing:0.773px">[NULL]</div>
<div class="t" style="left:1865.32px;top:326px;font-size:12px;color:#000000;letter-spacing:1.323px">103</div>
<div style="left:612px;top:343px;width:1308px;height:18px;background:#ffffff;"></div>
<div style="left:580px;top:343px;width:31px;height:18px;background:#e8e8e8;"></div>
<div style="left:580px;top:361px;width:32px;height:1px;background:#000000;"></div>
<div style="left:612px;top:361px;width:1308px;height:1px;background:#f1efec;"></div>
<div class="t" style="left:584.00px;top:346px;font-size:12px;color:#000000;letter-spacing:1.312px">6</div>
<div class="t" style="left:719.32px;top:345px;font-size:12px;color:#000000;letter-spacing:1.323px">105</div>
<div class="t" style="left:755.00px;top:345px;font-size:12px;color:#000000;letter-spacing:0.662px">David</div>
<div class="t" style="left:886.00px;top:345px;font-size:12px;color:#000000;letter-spacing:0.773px">Austin</div>
<div class="t" style="left:1013.00px;top:345px;font-size:12px;color:#000000;letter-spacing:0.190px">DAUSTIN</div>
<div class="t" style="left:1106.00px;top:345px;font-size:12px;color:#000000;letter-spacing:1.216px">590.423.4569</div>
<div class="t" style="left:1262.60px;top:345px;font-size:12px;color:#000000;letter-spacing:1.082px">2005-06-25 00:00:00</div>
<div class="t" style="left:1406.00px;top:345px;font-size:12px;color:#000000;letter-spacing:-0.384px">IT_PROG</div>
<div class="t" style="left:1555.19px;top:345px;font-size:12px;color:#000000;letter-spacing:1.194px">4,800</div>
<div class="t" style="left:1711.77px;top:345px;font-size:12px;color:#9b9b9b;letter-spacing:0.773px">[NULL]</div>
<div class="t" style="left:1865.32px;top:345px;font-size:12px;color:#000000;letter-spacing:1.323px">103</div>
<div style="left:612px;top:362px;width:1308px;height:18px;background:#dce6f2;"></div>
<div style="left:580px;top:362px;width:31px;height:18px;background:#e8e8e8;"></div>
<div style="left:580px;top:380px;width:32px;height:1px;background:#000000;"></div>
<div style="left:612px;top:380px;width:1308px;height:1px;background:#f1efec;"></div>
<div class="t" style="left:584.00px;top:365px;font-size:12px;color:#000000;letter-spacing:1.312px">7</div>
<div class="t" style="left:719.32px;top:364px;font-size:12px;color:#000000;letter-spacing:1.323px">106</div>
<div class="t" style="left:755.00px;top:364px;font-size:12px;color:#000000;letter-spacing:0.441px">Valli</div>
<div class="t" style="left:886.00px;top:364px;font-size:12px;color:#000000;letter-spacing:0.439px">Pataballa</div>
<div class="t" style="left:1013.00px;top:364px;font-size:12px;color:#000000;letter-spacing:0.205px">VPATABAL</div>
<div class="t" style="left:1106.00px;top:364px;font-size:12px;color:#000000;letter-spacing:1.216px">590.423.4560</div>
<div class="t" style="left:1262.60px;top:364px;font-size:12px;color:#000000;letter-spacing:1.082px">2006-02-05 00:00:00</div>
<div class="t" style="left:1406.00px;top:364px;font-size:12px;color:#000000;letter-spacing:-0.384px">IT_PROG</div>
<div class="t" style="left:1555.19px;top:364px;font-size:12px;color:#000000;letter-spacing:1.194px">4,800</div>
<div class="t" style="left:1711.77px;top:364px;font-size:12px;color:#9b9b9b;letter-spacing:0.773px">[NULL]</div>
<div class="t" style="left:1865.32px;top:364px;font-size:12px;color:#000000;letter-spacing:1.323px">103</div>
<div style="left:612px;top:381px;width:1308px;height:18px;background:#ffffff;"></div>
<div style="left:580px;top:381px;width:31px;height:18px;background:#e8e8e8;"></div>
<div style="left:580px;top:399px;width:32px;height:1px;background:#000000;"></div>
<div style="left:612px;top:399px;width:1308px;height:1px;background:#f1efec;"></div>
<div class="t" style="left:584.00px;top:384px;font-size:12px;color:#000000;letter-spacing:1.312px">8</div>
<div class="t" style="left:719.32px;top:383px;font-size:12px;color:#000000;letter-spacing:1.323px">107</div>
<div class="t" style="left:755.00px;top:383px;font-size:12px;color:#000000;letter-spacing:0.528px">Diana</div>
<div class="t" style="left:886.00px;top:383px;font-size:12px;color:#000000;letter-spacing:0.710px">Lorentz</div>
<div class="t" style="left:1013.00px;top:383px;font-size:12px;color:#000000;letter-spacing:0.041px">DLORENTZ</div>
<div class="t" style="left:1106.00px;top:383px;font-size:12px;color:#000000;letter-spacing:1.216px">590.423.5567</div>
<div class="t" style="left:1262.60px;top:383px;font-size:12px;color:#000000;letter-spacing:1.082px">2007-02-07 00:00:00</div>
<div class="t" style="left:1406.00px;top:383px;font-size:12px;color:#000000;letter-spacing:-0.384px">IT_PROG</div>
<div class="t" style="left:1555.19px;top:383px;font-size:12px;color:#000000;letter-spacing:1.194px">4,200</div>
<div class="t" style="left:1711.77px;top:383px;font-size:12px;color:#9b9b9b;letter-spacing:0.773px">[NULL]</div>
<div class="t" style="left:1865.32px;top:383px;font-size:12px;color:#000000;letter-spacing:1.323px">103</div>
<div style="left:612px;top:400px;width:1308px;height:18px;background:#dce6f2;"></div>
<div style="left:580px;top:400px;width:31px;height:18px;background:#e8e8e8;"></div>
<div style="left:580px;top:418px;width:32px;height:1px;background:#000000;"></div>
<div style="left:612px;top:418px;width:1308px;height:1px;background:#f1efec;"></div>
<div class="t" style="left:584.00px;top:403px;font-size:12px;color:#000000;letter-spacing:1.312px">9</div>
<div class="t" style="left:719.32px;top:402px;font-size:12px;color:#000000;letter-spacing:1.323px">108</div>
<div class="t" style="left:755.00px;top:402px;font-size:12px;color:#000000;letter-spacing:0.797px">Nancy</div>
<div class="t" style="left:886.00px;top:402px;font-size:12px;color:#000000;letter-spacing:0.736px">Greenberg</div>
<div class="t" style="left:1013.00px;top:402px;font-size:12px;color:#000000;letter-spacing:-0.045px">NGREENBE</div>
<div class="t" style="left:1106.00px;top:402px;font-size:12px;color:#000000;letter-spacing:1.216px">515.124.4569</div>
<div class="t" style="left:1262.60px;top:402px;font-size:12px;color:#000000;letter-spacing:1.082px">2002-08-17 00:00:00</div>
<div class="t" style="left:1406.00px;top:402px;font-size:12px;color:#000000;letter-spacing:-0.224px">FI_MGR</div>
<div class="t" style="left:1547.22px;top:402px;font-size:12px;color:#000000;letter-spacing:1.216px">12,008</div>
<div class="t" style="left:1711.77px;top:402px;font-size:12px;color:#9b9b9b;letter-spacing:0.773px">[NULL]</div>
<div class="t" style="left:1865.32px;top:402px;font-size:12px;color:#000000;letter-spacing:1.323px">101</div>
<div style="left:612px;top:419px;width:1308px;height:18px;background:#ffffff;"></div>
<div style="left:580px;top:419px;width:31px;height:18px;background:#e8e8e8;"></div>
<div style="left:580px;top:437px;width:32px;height:1px;background:#000000;"></div>
<div style="left:612px;top:437px;width:1308px;height:1px;background:#f1efec;"></div>
<div class="t" style="left:584.00px;top:422px;font-size:12px;color:#000000;letter-spacing:1.320px">10</div>
<div class="t" style="left:719.32px;top:421px;font-size:12px;color:#000000;letter-spacing:1.323px">109</div>
<div class="t" style="left:755.00px;top:421px;font-size:12px;color:#000000;letter-spacing:0.495px">Daniel</div>
<div class="t" style="left:886.00px;top:421px;font-size:12px;color:#000000;letter-spacing:0.552px">Faviet</div>
<div class="t" style="left:1013.00px;top:421px;font-size:12px;color:#000000;letter-spacing:0.268px">DFAVIET</div>
<div class="t" style="left:1106.00px;top:421px;font-size:12px;color:#000000;letter-spacing:1.216px">515.124.4169</div>
<div class="t" style="left:1262.60px;top:421px;font-size:12px;color:#000000;letter-spacing:1.082px">2002-08-16 00:00:00</div>
<div class="t" style="left:1406.00px;top:421px;font-size:12px;color:#000000;letter-spacing:-0.167px">FI_ACCOUNT</div>
<div class="t" style="left:1555.19px;top:421px;font-size:12px;color:#000000;letter-spacing:1.194px">9,000</div>
<div class="t" style="left:1711.77px;top:421px;font-size:12px;color:#9b9b9b;letter-spacing:0.773px">[NULL]</div>
<div class="t" style="left:1865.32px;top:421px;font-size:12px;color:#000000;letter-spacing:1.323px">108</div>
<div style="left:612px;top:438px;width:1308px;height:18px;background:#dce6f2;"></div>
<div style="left:580px;top:438px;width:31px;height:18px;background:#e8e8e8;"></div>
<div style="left:580px;top:456px;width:32px;height:1px;background:#000000;"></div>
<div style="left:612px;top:456px;width:1308px;height:1px;background:#f1efec;"></div>
<div class="t" style="left:584.00px;top:441px;font-size:12px;color:#000000;letter-spacing:1.766px">11</div>
<div class="t" style="left:719.62px;top:440px;font-size:12px;color:#000000;letter-spacing:1.620px">110</div>
<div class="t" style="left:755.00px;top:440px;font-size:12px;color:#000000;letter-spacing:0.242px">John</div>
<div class="t" style="left:886.00px;top:440px;font-size:12px;color:#000000;letter-spacing:0.578px">Chen</div>
<div class="t" style="left:1013.00px;top:440px;font-size:12px;color:#000000;letter-spacing:-0.403px">JCHEN</div>
<div class="t" style="left:1106.00px;top:440px;font-size:12px;color:#000000;letter-spacing:1.216px">515.124.4269</div>
<div class="t" style="left:1262.60px;top:440px;font-size:12px;color:#000000;letter-spacing:1.082px">2005-09-28 00:00:00</div>
<div class="t" style="left:1406.00px;top:440px;font-size:12px;color:#000000;letter-spacing:-0.167px">FI_ACCOUNT</div>
<div class="t" style="left:1555.19px;top:440px;font-size:12px;color:#000000;letter-spacing:1.194px">8,200</div>
<div class="t" style="left:1711.77px;top:440px;font-size:12px;color:#9b9b9b;letter-spacing:0.773px">[NULL]</div>
<div class="t" style="left:1865.32px;top:440px;font-size:12px;color:#000000;letter-spacing:1.323px">108</div>
<div style="left:612px;top:457px;width:1308px;height:18px;background:#ffffff;"></div>
<div style="left:580px;top:457px;width:31px;height:18px;background:#e8e8e8;"></div>
<div style="left:580px;top:475px;width:32px;height:1px;background:#000000;"></div>
<div style="left:612px;top:475px;width:1308px;height:1px;background:#f1efec;"></div>
<div class="t" style="left:584.00px;top:460px;font-size:12px;color:#000000;letter-spacing:1.320px">12</div>
<div class="t" style="left:719.92px;top:459px;font-size:12px;color:#000000;letter-spacing:1.917px">111</div>
<div class="t" style="left:755.00px;top:459px;font-size:12px;color:#000000;letter-spacing:0.609px">Ismael</div>
<div class="t" style="left:886.00px;top:459px;font-size:12px;color:#000000;letter-spacing:0.569px">Sciarra</div>
<div class="t" style="left:1013.00px;top:459px;font-size:12px;color:#000000;letter-spacing:-0.086px">ISCIARRA</div>
<div class="t" style="left:1106.00px;top:459px;font-size:12px;color:#000000;letter-spacing:1.216px">515.124.4369</div>
<div class="t" style="left:1262.60px;top:459px;font-size:12px;color:#000000;letter-spacing:1.082px">2005-09-30 00:00:00</div>
<div class="t" style="left:1406.00px;top:459px;font-size:12px;color:#000000;letter-spacing:-0.167px">FI_ACCOUNT</div>
<div class="t" style="left:1555.19px;top:459px;font-size:12px;color:#000000;letter-spacing:1.194px">7,700</div>
<div class="t" style="left:1711.77px;top:459px;font-size:12px;color:#9b9b9b;letter-spacing:0.773px">[NULL]</div>
<div class="t" style="left:1865.32px;top:459px;font-size:12px;color:#000000;letter-spacing:1.323px">108</div>
<div style="left:612px;top:476px;width:1308px;height:18px;background:#dce6f2;"></div>
<div style="left:580px;top:476px;width:31px;height:18px;background:#e8e8e8;"></div>
<div style="left:580px;top:494px;width:32px;height:1px;background:#000000;"></div>
<div style="left:612px;top:494px;width:1308px;height:1px;background:#f1efec;"></div>
<div class="t" style="left:584.00px;top:479px;font-size:12px;color:#000000;letter-spacing:1.320px">13</div>
<div class="t" style="left:719.62px;top:478px;font-size:12px;color:#000000;letter-spacing:1.620px">112</div>
<div class="t" style="left:755.00px;top:478px;font-size:12px;color:#000000;letter-spacing:0.268px">Jose Manuel</div>
<div class="t" style="left:886.00px;top:478px;font-size:12px;color:#000000;letter-spacing:0.997px">Urman</div>
<div class="t" style="left:1013.00px;top:478px;font-size:12px;color:#000000;letter-spacing:-0.286px">JMURMAN</div>
<div class="t" style="left:1106.00px;top:478px;font-size:12px;color:#000000;letter-spacing:1.216px">515.124.4469</div>
<div class="t" style="left:1262.60px;top:478px;font-size:12px;color:#000000;letter-spacing:1.082px">2006-03-07 00:00:00</div>
<div class="t" style="left:1406.00px;top:478px;font-size:12px;color:#000000;letter-spacing:-0.167px">FI_ACCOUNT</div>
<div class="t" style="left:1555.19px;top:478px;font-size:12px;color:#000000;letter-spacing:1.194px">7,800</div>
<div class="t" style="left:1711.77px;top:478px;font-size:12px;color:#9b9b9b;letter-spacing:0.773px">[NULL]</div>
<div class="t" style="left:1865.32px;top:478px;font-size:12px;color:#000000;letter-spacing:1.323px">108</div>
<div style="left:612px;top:495px;width:1308px;height:18px;background:#ffffff;"></div>
<div style="left:580px;top:495px;width:31px;height:18px;background:#e8e8e8;"></div>
<div style="left:580px;top:513px;width:32px;height:1px;background:#000000;"></div>
<div style="left:612px;top:513px;width:1308px;height:1px;background:#f1efec;"></div>
<div class="t" style="left:584.00px;top:498px;font-size:12px;color:#000000;letter-spacing:1.320px">14</div>
<div class="t" style="left:719.62px;top:497px;font-size:12px;color:#000000;letter-spacing:1.620px">113</div>
<div class="t" style="left:755.00px;top:497px;font-size:12px;color:#000000;letter-spacing:0.496px">Luis</div>
<div class="t" style="left:886.00px;top:497px;font-size:12px;color:#000000;letter-spacing:0.492px">Popp</div>
<div class="t" style="left:1013.00px;top:497px;font-size:12px;color:#000000;letter-spacing:-0.606px">LPOPP</div>
<div class="t" style="left:1106.00px;top:497px;font-size:12px;color:#000000;letter-spacing:1.216px">515.124.4567</div>
<div class="t" style="left:1262.60px;top:497px;font-size:12px;color:#000000;letter-spacing:1.082px">2007-12-07 00:00:00</div>
<div class="t" style="left:1406.00px;top:497px;font-size:12px;color:#000000;letter-spacing:-0.167px">FI_ACCOUNT</div>
<div class="t" style="left:1555.19px;top:497px;font-size:12px;color:#000000;letter-spacing:1.194px">6,900</div>
<div class="t" style="left:1711.77px;top:497px;font-size:12px;color:#9b9b9b;letter-spacing:0.773px">[NULL]</div>
<div class="t" style="left:1865.32px;top:497px;font-size:12px;color:#000000;letter-spacing:1.323px">108</div>
<div style="left:612px;top:514px;width:1308px;height:18px;background:#dce6f2;"></div>
<div style="left:580px;top:514px;width:31px;height:18px;background:#e8e8e8;"></div>
<div style="left:580px;top:532px;width:32px;height:1px;background:#000000;"></div>
<div style="left:612px;top:532px;width:1308px;height:1px;background:#f1efec;"></div>
<div class="t" style="left:584.00px;top:517px;font-size:12px;color:#000000;letter-spacing:1.320px">15</div>
<div class="t" style="left:719.62px;top:516px;font-size:12px;color:#000000;letter-spacing:1.620px">114</div>
<div class="t" style="left:755.00px;top:516px;font-size:12px;color:#000000;letter-spacing:0.661px">Den</div>
<div class="t" style="left:886.00px;top:516px;font-size:12px;color:#000000;letter-spacing:0.537px">Raphaely</div>
<div class="t" style="left:1013.00px;top:516px;font-size:12px;color:#000000;letter-spacing:-0.086px">DRAPHEAL</div>
<div class="t" style="left:1106.00px;top:516px;font-size:12px;color:#000000;letter-spacing:1.216px">515.127.4561</div>
<div class="t" style="left:1262.60px;top:516px;font-size:12px;color:#000000;letter-spacing:1.082px">2002-12-07 00:00:00</div>
<div class="t" style="left:1406.00px;top:516px;font-size:12px;color:#000000;letter-spacing:-0.169px">PU_MAN</div>
<div class="t" style="left:1547.36px;top:516px;font-size:12px;color:#000000;letter-spacing:1.365px">11,000</div>
<div class="t" style="left:1711.77px;top:516px;font-size:12px;color:#9b9b9b;letter-spacing:0.773px">[NULL]</div>
<div class="t" style="left:1865.32px;top:516px;font-size:12px;color:#000000;letter-spacing:1.323px">100</div>
<div style="left:612px;top:533px;width:1308px;height:18px;background:#ffffff;"></div>
<div style="left:580px;top:533px;width:31px;height:18px;background:#e8e8e8;"></div>
<div style="left:580px;top:551px;width:32px;height:1px;background:#000000;"></div>
<div style="left:612px;top:551px;width:1308px;height:1px;background:#f1efec;"></div>
<div class="t" style="left:584.00px;top:536px;font-size:12px;color:#000000;letter-spacing:1.320px">16</div>
<div class="t" style="left:719.62px;top:535px;font-size:12px;color:#000000;letter-spacing:1.620px">115</div>
<div class="t" style="left:755.00px;top:535px;font-size:12px;color:#000000;letter-spacing:0.661px">Alexander</div>
<div class="t" style="left:886.00px;top:535px;font-size:12px;color:#000000;letter-spacing:0.492px">Khoo</div>
<div class="t" style="left:1013.00px;top:535px;font-size:12px;color:#000000;letter-spacing:-0.069px">AKHOO</div>
<div class="t" style="left:1106.00px;top:535px;font-size:12px;color:#000000;letter-spacing:1.216px">515.127.4562</div>
<div class="t" style="left:1262.60px;top:535px;font-size:12px;color:#000000;letter-spacing:1.082px">2003-05-18 00:00:00</div>
<div class="t" style="left:1406.00px;top:535px;font-size:12px;color:#000000;letter-spacing:-0.295px">PU_CLERK</div>
<div class="t" style="left:1555.19px;top:535px;font-size:12px;color:#000000;letter-spacing:1.194px">3,100</div>
<div class="t" style="left:1711.77px;top:535px;font-size:12px;color:#9b9b9b;letter-spacing:0.773px">[NULL]</div>
<div class="t" style="left:1865.62px;top:535px;font-size:12px;color:#000000;letter-spacing:1.620px">114</div>
<div style="left:612px;top:552px;width:1308px;height:18px;background:#dce6f2;"></div>
<div style="left:580px;top:552px;width:31px;height:18px;background:#e8e8e8;"></div>
<div style="left:580px;top:570px;width:32px;height:1px;background:#000000;"></div>
<div style="left:612px;top:570px;width:1308px;height:1px;background:#f1efec;"></div>
<div class="t" style="left:584.00px;top:555px;font-size:12px;color:#000000;letter-spacing:1.320px">17</div>
<div class="t" style="left:719.62px;top:554px;font-size:12px;color:#000000;letter-spacing:1.620px">116</div>
<div class="t" style="left:755.00px;top:554px;font-size:12px;color:#000000;letter-spacing:0.440px">Shelli</div>
<div class="t" style="left:886.00px;top:554px;font-size:12px;color:#000000;letter-spacing:0.459px">Baida</div>
<div class="t" style="left:1013.00px;top:554px;font-size:12px;color:#000000;letter-spacing:0.164px">SBAIDA</div>
<div class="t" style="left:1106.00px;top:554px;font-size:12px;color:#000000;letter-spacing:1.216px">515.127.4563</div>
<div class="t" style="left:1262.60px;top:554px;font-size:12px;color:#000000;letter-spacing:1.082px">2005-12-24 00:00:00</div>
<div class="t" style="left:1406.00px;top:554px;font-size:12px;color:#000000;letter-spacing:-0.295px">PU_CLERK</div>
<div class="t" style="left:1555.19px;top:554px;font-size:12px;color:#000000;letter-spacing:1.194px">2,900</div>
<div class="t" style="left:1711.77px;top:554px;font-size:12px;color:#9b9b9b;letter-spacing:0.773px">[NULL]</div>
<div class="t" style="left:1865.62px;top:554px;font-size:12px;color:#000000;letter-spacing:1.620px">114</div>
<div style="left:612px;top:571px;width:1308px;height:18px;background:#ffffff;"></div>
<div style="left:580px;top:571px;width:31px;height:18px;background:#e8e8e8;"></div>
<div style="left:580px;top:589px;width:32px;height:1px;background:#000000;"></div>
<div style="left:612px;top:589px;width:1308px;height:1px;background:#f1efec;"></div>
<div class="t" style="left:584.00px;top:574px;font-size:12px;color:#000000;letter-spacing:1.320px">18</div>
<div class="t" style="left:719.62px;top:573px;font-size:12px;color:#000000;letter-spacing:1.620px">117</div>
<div class="t" style="left:755.00px;top:573px;font-size:12px;color:#000000;letter-spacing:0.463px">Sigal</div>
<div class="t" style="left:886.00px;top:573px;font-size:12px;color:#000000;letter-spacing:0.552px">Tobias</div>
<div class="t" style="left:1013.00px;top:573px;font-size:12px;color:#000000;letter-spacing:0.029px">STOBIAS</div>
<div class="t" style="left:1106.00px;top:573px;font-size:12px;color:#000000;letter-spacing:1.216px">515.127.4564</div>
<div class="t" style="left:1262.60px;top:573px;font-size:12px;color:#000000;letter-spacing:1.082px">2005-07-24 00:00:00</div>
<div class="t" style="left:1406.00px;top:573px;font-size:12px;color:#000000;letter-spacing:-0.295px">PU_CLERK</div>
<div class="t" style="left:1555.19px;top:573px;font-size:12px;color:#000000;letter-spacing:1.194px">2,800</div>
<div class="t" style="left:1711.77px;top:573px;font-size:12px;color:#9b9b9b;letter-spacing:0.773px">[NULL]</div>
<div class="t" style="left:1865.62px;top:573px;font-size:12px;color:#000000;letter-spacing:1.620px">114</div>
<div style="left:612px;top:590px;width:1308px;height:18px;background:#dce6f2;"></div>
<div style="left:580px;top:590px;width:31px;height:18px;background:#e8e8e8;"></div>
<div style="left:580px;top:608px;width:32px;height:1px;background:#000000;"></div>
<div style="left:612px;top:608px;width:1308px;height:1px;background:#f1efec;"></div>
<div class="t" style="left:584.00px;top:593px;font-size:12px;color:#000000;letter-spacing:1.320px">19</div>
<div class="t" style="left:719.62px;top:592px;font-size:12px;color:#000000;letter-spacing:1.620px">118</div>
<div class="t" style="left:755.00px;top:592px;font-size:12px;color:#000000;letter-spacing:0.661px">Guy</div>
<div class="t" style="left:886.00px;top:592px;font-size:12px;color:#000000;letter-spacing:0.888px">Himuro</div>
<div class="t" style="left:1013.00px;top:592px;font-size:12px;color:#000000">GHIMURO</div>
<div class="t" style="left:1106.00px;top:592px;font-size:12px;color:#000000;letter-spacing:1.216px">515.127.4565</div>
<div class="t" style="left:1262.60px;top:592px;font-size:12px;color:#000000;letter-spacing:1.129px">2006-11-15 00:00:00</div>
<div class="t" style="left:1406.00px;top:592px;font-size:12px;color:#000000;letter-spacing:-0.295px">PU_CLERK</div>
<div class="t" style="left:1555.19px;top:592px;font-size:12px;color:#000000;letter-spacing:1.194px">2,600</div>
<div class="t" style="left:1711.77px;top:592px;font-size:12px;color:#9b9b9b;letter-spacing:0.773px">[NULL]</div>
<div class="t" style="left:1865.62px;top:592px;font-size:12px;color:#000000;letter-spacing:1.620px">114</div>
<div style="left:612px;top:609px;width:1308px;height:18px;background:#ffffff;"></div>
<div style="left:580px;top:609px;width:31px;height:18px;background:#e8e8e8;"></div>
<div style="left:580px;top:627px;width:32px;height:1px;background:#000000;"></div>
<div style="left:612px;top:627px;width:1308px;height:1px;background:#f1efec;"></div>
<div class="t" style="left:584.00px;top:612px;font-size:12px;color:#000000;letter-spacing:1.320px">20</div>
<div class="t" style="left:719.62px;top:611px;font-size:12px;color:#000000;letter-spacing:1.620px">119</div>
<div class="t" style="left:755.00px;top:611px;font-size:12px;color:#000000;letter-spacing:0.594px">Karen</div>
<div class="t" style="left:886.00px;top:611px;font-size:12px;color:#000000;letter-spacing:0.530px">Colmenares</div>
<div class="t" style="left:1013.00px;top:611px;font-size:12px;color:#000000;letter-spacing:-0.045px">KCOLMENA</div>
<div class="t" style="left:1106.00px;top:611px;font-size:12px;color:#000000;letter-spacing:1.216px">515.127.4566</div>
<div class="t" style="left:1262.60px;top:611px;font-size:12px;color:#000000;letter-spacing:1.082px">2007-08-10 00:00:00</div>
<div class="t" style="left:1406.00px;top:611px;font-size:12px;color:#000000;letter-spacing:-0.295px">PU_CLERK</div>
<div class="t" style="left:1555.19px;top:611px;font-size:12px;color:#000000;letter-spacing:1.194px">2,500</div>
<div class="t" style="left:1711.77px;top:611px;font-size:12px;color:#9b9b9b;letter-spacing:0.773px">[NULL]</div>
<div class="t" style="left:1865.62px;top:611px;font-size:12px;color:#000000;letter-spacing:1.620px">114</div>
<div style="left:612px;top:628px;width:1308px;height:18px;background:#dce6f2;"></div>
<div style="left:580px;top:628px;width:31px;height:18px;background:#e8e8e8;"></div>
<div style="left:580px;top:646px;width:32px;height:1px;background:#000000;"></div>
<div style="left:612px;top:646px;width:1308px;height:1px;background:#f1efec;"></div>
<div class="t" style="left:584.00px;top:631px;font-size:12px;color:#000000;letter-spacing:1.320px">21</div>
<div class="t" style="left:719.32px;top:630px;font-size:12px;color:#000000;letter-spacing:1.323px">120</div>
<div class="t" style="left:755.00px;top:630px;font-size:12px;color:#000000;letter-spacing:0.949px">Matthew</div>
<div class="t" style="left:886.00px;top:630px;font-size:12px;color:#000000;letter-spacing:0.309px">Weiss</div>
<div class="t" style="left:1013.00px;top:630px;font-size:12px;color:#000000;letter-spacing:0.221px">MWEISS</div>
<div class="t" style="left:1106.00px;top:630px;font-size:12px;color:#000000;letter-spacing:1.216px">650.123.1234</div>
<div class="t" style="left:1262.60px;top:630px;font-size:12px;color:#000000;letter-spacing:1.082px">2004-07-18 00:00:00</div>
<div class="t" style="left:1406.00px;top:630px;font-size:12px;color:#000000;letter-spacing:-0.115px">ST_MAN</div>
<div class="t" style="left:1555.19px;top:630px;font-size:12px;color:#000000;letter-spacing:1.194px">8,000</div>
<div class="t" style="left:1711.77px;top:630px;font-size:12px;color:#9b9b9b;letter-spacing:0.773px">[NULL]</div>
<div class="t" style="left:1865.32px;top:630px;font-size:12px;color:#000000;letter-spacing:1.323px">100</div>
<div style="left:612px;top:647px;width:1308px;height:18px;background:#ffffff;"></div>
<div style="left:580px;top:647px;width:31px;height:18px;background:#e8e8e8;"></div>
<div style="left:580px;top:665px;width:32px;height:1px;background:#000000;"></div>
<div style="left:612px;top:665px;width:1308px;height:1px;background:#f1efec;"></div>
<div class="t" style="left:584.00px;top:650px;font-size:12px;color:#000000;letter-spacing:1.320px">22</div>
<div class="t" style="left:719.32px;top:649px;font-size:12px;color:#000000;letter-spacing:1.323px">121</div>
<div class="t" style="left:755.00px;top:649px;font-size:12px;color:#000000;letter-spacing:0.910px">Adam</div>
<div class="t" style="left:886.00px;top:649px;font-size:12px;color:#000000;letter-spacing:0.731px">Fripp</div>
<div class="t" style="left:1013.00px;top:649px;font-size:12px;color:#000000;letter-spacing:-0.391px">AFRIPP</div>
<div class="t" style="left:1106.00px;top:649px;font-size:12px;color:#000000;letter-spacing:1.216px">650.123.2234</div>
<div class="t" style="left:1262.60px;top:649px;font-size:12px;color:#000000;letter-spacing:1.082px">2005-04-10 00:00:00</div>
<div class="t" style="left:1406.00px;top:649px;font-size:12px;color:#000000;letter-spacing:-0.115px">ST_MAN</div>
<div class="t" style="left:1555.19px;top:649px;font-size:12px;color:#000000;letter-spacing:1.194px">8,200</div>
<div class="t" style="left:1711.77px;top:649px;font-size:12px;color:#9b9b9b;letter-spacing:0.773px">[NULL]</div>
<div class="t" style="left:1865.32px;top:649px;font-size:12px;color:#000000;letter-spacing:1.323px">100</div>
<div style="left:612px;top:666px;width:1308px;height:18px;background:#dce6f2;"></div>
<div style="left:580px;top:666px;width:31px;height:18px;background:#e8e8e8;"></div>
<div style="left:580px;top:684px;width:32px;height:1px;background:#000000;"></div>
<div style="left:612px;top:684px;width:1308px;height:1px;background:#f1efec;"></div>
<div class="t" style="left:584.00px;top:669px;font-size:12px;color:#000000;letter-spacing:1.320px">23</div>
<div class="t" style="left:719.32px;top:668px;font-size:12px;color:#000000;letter-spacing:1.323px">122</div>
<div class="t" style="left:755.00px;top:668px;font-size:12px;color:#000000;letter-spacing:0.528px">Payam</div>
<div class="t" style="left:886.00px;top:668px;font-size:12px;color:#000000;letter-spacing:0.703px">Kaufling</div>
<div class="t" style="left:1013.00px;top:668px;font-size:12px;color:#000000;letter-spacing:0.039px">PKAUFLIN</div>
<div class="t" style="left:1106.00px;top:668px;font-size:12px;color:#000000;letter-spacing:1.216px">650.123.3234</div>
<div class="t" style="left:1262.60px;top:668px;font-size:12px;color:#000000;letter-spacing:1.082px">2003-05-01 00:00:00</div>
<div class="t" style="left:1406.00px;top:668px;font-size:12px;color:#000000;letter-spacing:-0.115px">ST_MAN</div>
<div class="t" style="left:1555.19px;top:668px;font-size:12px;color:#000000;letter-spacing:1.194px">7,900</div>
<div class="t" style="left:1711.77px;top:668px;font-size:12px;color:#9b9b9b;letter-spacing:0.773px">[NULL]</div>
<div class="t" style="left:1865.32px;top:668px;font-size:12px;color:#000000;letter-spacing:1.323px">100</div>
<div style="left:612px;top:685px;width:1308px;height:18px;background:#ffffff;"></div>
<div style="left:580px;top:685px;width:31px;height:18px;background:#e8e8e8;"></div>
<div style="left:580px;top:703px;width:32px;height:1px;background:#000000;"></div>
<div style="left:612px;top:703px;width:1308px;height:1px;background:#f1efec;"></div>
<div class="t" style="left:584.00px;top:688px;font-size:12px;color:#000000;letter-spacing:1.320px">24</div>
<div class="t" style="left:719.32px;top:687px;font-size:12px;color:#000000;letter-spacing:1.323px">123</div>
<div class="t" style="left:755.00px;top:687px;font-size:12px;color:#000000;letter-spacing:0.826px">Shanta</div>
<div class="t" style="left:886.00px;top:687px;font-size:12px;color:#000000;letter-spacing:0.757px">Vollman</div>
<div class="t" style="left:1013.00px;top:687px;font-size:12px;color:#000000;letter-spacing:0.080px">SVOLLMAN</div>
<div class="t" style="left:1106.00px;top:687px;font-size:12px;color:#000000;letter-spacing:1.216px">650.123.4234</div>
<div class="t" style="left:1262.60px;top:687px;font-size:12px;color:#000000;letter-spacing:1.082px">2005-10-10 00:00:00</div>
<div class="t" style="left:1406.00px;top:687px;font-size:12px;color:#000000;letter-spacing:-0.115px">ST_MAN</div>
<div class="t" style="left:1555.19px;top:687px;font-size:12px;color:#000000;letter-spacing:1.194px">6,500</div>
<div class="t" style="left:1711.77px;top:687px;font-size:12px;color:#9b9b9b;letter-spacing:0.773px">[NULL]</div>
<div class="t" style="left:1865.32px;top:687px;font-size:12px;color:#000000;letter-spacing:1.323px">100</div>
<div style="left:612px;top:704px;width:1308px;height:18px;background:#dce6f2;"></div>
<div style="left:580px;top:704px;width:31px;height:18px;background:#e8e8e8;"></div>
<div style="left:580px;top:722px;width:32px;height:1px;background:#000000;"></div>
<div style="left:612px;top:722px;width:1308px;height:1px;background:#f1efec;"></div>
<div class="t" style="left:584.00px;top:707px;font-size:12px;color:#000000;letter-spacing:1.320px">25</div>
<div class="t" style="left:719.32px;top:706px;font-size:12px;color:#000000;letter-spacing:1.323px">124</div>
<div class="t" style="left:755.00px;top:706px;font-size:12px;color:#000000;letter-spacing:0.594px">Kevin</div>
<div class="t" style="left:886.00px;top:706px;font-size:12px;color:#000000;letter-spacing:0.616px">Mourgos</div>
<div class="t" style="left:1013.00px;top:706px;font-size:12px;color:#000000;letter-spacing:-0.168px">KMOURGOS</div>
<div class="t" style="left:1106.00px;top:706px;font-size:12px;color:#000000;letter-spacing:1.216px">650.123.5234</div>
<div class="t" style="left:1262.60px;top:706px;font-size:12px;color:#000000;letter-spacing:1.129px">2007-11-16 00:00:00</div>
<div class="t" style="left:1406.00px;top:706px;font-size:12px;color:#000000;letter-spacing:-0.115px">ST_MAN</div>
<div class="t" style="left:1555.19px;top:706px;font-size:12px;color:#000000;letter-spacing:1.194px">5,800</div>
<div class="t" style="left:1711.77px;top:706px;font-size:12px;color:#9b9b9b;letter-spacing:0.773px">[NULL]</div>
<div class="t" style="left:1865.32px;top:706px;font-size:12px;color:#000000;letter-spacing:1.323px">100</div>
<div style="left:612px;top:723px;width:1308px;height:18px;background:#ffffff;"></div>
<div style="left:580px;top:723px;width:31px;height:18px;background:#e8e8e8;"></div>
<div style="left:580px;top:741px;width:32px;height:1px;background:#000000;"></div>
<div style="left:612px;top:741px;width:1308px;height:1px;background:#f1efec;"></div>
<div class="t" style="left:584.00px;top:726px;font-size:12px;color:#000000;letter-spacing:1.320px">26</div>
<div class="t" style="left:719.32px;top:725px;font-size:12px;color:#000000;letter-spacing:1.323px">125</div>
<div class="t" style="left:755.00px;top:725px;font-size:12px;color:#000000;letter-spacing:0.062px">Julia</div>
<div class="t" style="left:886.00px;top:725px;font-size:12px;color:#000000;letter-spacing:0.597px">Nayer</div>
<div class="t" style="left:1013.00px;top:725px;font-size:12px;color:#000000;letter-spacing:-0.409px">JNAYER</div>
<div class="t" style="left:1106.00px;top:725px;font-size:12px;color:#000000;letter-spacing:1.216px">650.124.1214</div>
<div class="t" style="left:1262.60px;top:725px;font-size:12px;color:#000000;letter-spacing:1.082px">2005-07-16 00:00:00</div>
<div class="t" style="left:1406.00px;top:725px;font-size:12px;color:#000000;letter-spacing:-0.254px">ST_CLERK</div>
<div class="t" style="left:1555.19px;top:725px;font-size:12px;color:#000000;letter-spacing:1.194px">3,200</div>
<div class="t" style="left:1711.77px;top:725px;font-size:12px;color:#9b9b9b;letter-spacing:0.773px">[NULL]</div>
<div class="t" style="left:1865.32px;top:725px;font-size:12px;color:#000000;letter-spacing:1.323px">120</div>
<div style="left:612px;top:742px;width:1308px;height:18px;background:#dce6f2;"></div>
<div style="left:580px;top:742px;width:31px;height:18px;background:#e8e8e8;"></div>
<div style="left:580px;top:760px;width:32px;height:1px;background:#000000;"></div>
<div style="left:612px;top:760px;width:1308px;height:1px;background:#f1efec;"></div>
<div class="t" style="left:584.00px;top:745px;font-size:12px;color:#000000;letter-spacing:1.320px">27</div>
<div class="t" style="left:719.32px;top:744px;font-size:12px;color:#000000;letter-spacing:1.323px">126</div>
<div class="t" style="left:755.00px;top:744px;font-size:12px;color:#000000;letter-spacing:0.728px">Irene</div>
<div class="t" style="left:886.00px;top:744px;font-size:12px;color:#000000;letter-spacing:0.604px">Mikkilineni</div>
<div class="t" style="left:1013.00px;top:744px;font-size:12px;color:#000000;letter-spacing:0.373px">IMIKKILI</div>
<div class="t" style="left:1106.00px;top:744px;font-size:12px;color:#000000;letter-spacing:1.216px">650.124.1224</div>
<div class="t" style="left:1262.60px;top:744px;font-size:12px;color:#000000;letter-spacing:1.082px">2006-09-28 00:00:00</div>
<div class="t" style="left:1406.00px;top:744px;font-size:12px;color:#000000;letter-spacing:-0.254px">ST_CLERK</div>
<div class="t" style="left:1555.19px;top:744px;font-size:12px;color:#000000;letter-spacing:1.194px">2,700</div>
<div class="t" style="left:1711.77px;top:744px;font-size:12px;color:#9b9b9b;letter-spacing:0.773px">[NULL]</div>
<div class="t" style="left:1865.32px;top:744px;font-size:12px;color:#000000;letter-spacing:1.323px">120</div>
<div style="left:612px;top:761px;width:1308px;height:18px;background:#ffffff;"></div>
<div style="left:580px;top:761px;width:31px;height:18px;background:#e8e8e8;"></div>
<div style="left:580px;top:779px;width:32px;height:1px;background:#000000;"></div>
<div style="left:612px;top:779px;width:1308px;height:1px;background:#f1efec;"></div>
<div class="t" style="left:584.00px;top:764px;font-size:12px;color:#000000;letter-spacing:1.320px">28</div>
<div class="t" style="left:719.32px;top:763px;font-size:12px;color:#000000;letter-spacing:1.323px">127</div>
<div class="t" style="left:755.00px;top:763px;font-size:12px;color:#000000;letter-spacing:0.131px">James</div>
<div class="t" style="left:886.00px;top:763px;font-size:12px;color:#000000;letter-spacing:0.883px">Landry</div>
<div class="t" style="left:1013.00px;top:763px;font-size:12px;color:#000000;letter-spacing:-0.353px">JLANDRY</div>
<div class="t" style="left:1106.00px;top:763px;font-size:12px;color:#000000;letter-spacing:1.216px">650.124.1334</div>
<div class="t" style="left:1262.60px;top:763px;font-size:12px;color:#000000;letter-spacing:1.082px">2007-01-14 00:00:00</div>
<div class="t" style="left:1406.00px;top:763px;font-size:12px;color:#000000;letter-spacing:-0.254px">ST_CLERK</div>
<div class="t" style="left:1555.19px;top:763px;font-size:12px;color:#000000;letter-spacing:1.194px">2,400</div>
<div class="t" style="left:1711.77px;top:763px;font-size:12px;color:#9b9b9b;letter-spacing:0.773px">[NULL]</div>
<div class="t" style="left:1865.32px;top:763px;font-size:12px;color:#000000;letter-spacing:1.323px">120</div>
<div style="left:612px;top:780px;width:1308px;height:18px;background:#dce6f2;"></div>
<div style="left:580px;top:780px;width:31px;height:18px;background:#e8e8e8;"></div>
<div style="left:580px;top:798px;width:32px;height:1px;background:#000000;"></div>
<div style="left:612px;top:798px;width:1308px;height:1px;background:#f1efec;"></div>
<div class="t" style="left:584.00px;top:783px;font-size:12px;color:#000000;letter-spacing:1.320px">29</div>
<div class="t" style="left:719.32px;top:782px;font-size:12px;color:#000000;letter-spacing:1.323px">128</div>
<div class="t" style="left:755.00px;top:782px;font-size:12px;color:#000000;letter-spacing:0.773px">Steven</div>
<div class="t" style="left:886.00px;top:782px;font-size:12px;color:#000000;letter-spacing:0.497px">Markle</div>
<div class="t" style="left:1013.00px;top:782px;font-size:12px;color:#000000;letter-spacing:-0.051px">SMARKLE</div>
<div class="t" style="left:1106.00px;top:782px;font-size:12px;color:#000000;letter-spacing:1.216px">650.124.1434</div>
<div class="t" style="left:1262.60px;top:782px;font-size:12px;color:#000000;letter-spacing:1.082px">2008-03-08 00:00:00</div>
<div class="t" style="left:1406.00px;top:782px;font-size:12px;color:#000000;letter-spacing:-0.254px">ST_CLERK</div>
<div class="t" style="left:1555.19px;top:782px;font-size:12px;color:#000000;letter-spacing:1.194px">2,200</div>
<div class="t" style="left:1711.77px;top:782px;font-size:12px;color:#9b9b9b;letter-spacing:0.773px">[NULL]</div>
<div class="t" style="left:1865.32px;top:782px;font-size:12px;color:#000000;letter-spacing:1.323px">120</div>
<div style="left:612px;top:799px;width:1308px;height:18px;background:#ffffff;"></div>
<div style="left:580px;top:799px;width:31px;height:18px;background:#e8e8e8;"></div>
<div style="left:580px;top:817px;width:32px;height:1px;background:#000000;"></div>
<div style="left:612px;top:817px;width:1308px;height:1px;background:#f1efec;"></div>
<div class="t" style="left:584.00px;top:802px;font-size:12px;color:#000000;letter-spacing:1.320px">30</div>
<div class="t" style="left:719.32px;top:801px;font-size:12px;color:#000000;letter-spacing:1.323px">129</div>
<div class="t" style="left:755.00px;top:801px;font-size:12px;color:#000000;letter-spacing:0.659px">Laura</div>
<div class="t" style="left:886.00px;top:801px;font-size:12px;color:#000000;letter-spacing:0.385px">Bissot</div>
<div class="t" style="left:1013.00px;top:801px;font-size:12px;color:#000000;letter-spacing:0.045px">LBISSOT</div>
<div class="t" style="left:1106.00px;top:801px;font-size:12px;color:#000000;letter-spacing:1.216px">650.124.5234</div>
<div class="t" style="left:1262.60px;top:801px;font-size:12px;color:#000000;letter-spacing:1.082px">2005-08-20 00:00:00</div>
<div class="t" style="left:1406.00px;top:801px;font-size:12px;color:#000000;letter-spacing:-0.254px">ST_CLERK</div>
<div class="t" style="left:1555.19px;top:801px;font-size:12px;color:#000000;letter-spacing:1.194px">3,300</div>
<div class="t" style="left:1711.77px;top:801px;font-size:12px;color:#9b9b9b;letter-spacing:0.773px">[NULL]</div>
<div class="t" style="left:1865.32px;top:801px;font-size:12px;color:#000000;letter-spacing:1.323px">121</div>
<div style="left:612px;top:818px;width:1308px;height:18px;background:#dce6f2;"></div>
<div style="left:580px;top:818px;width:31px;height:18px;background:#e8e8e8;"></div>
<div style="left:580px;top:836px;width:32px;height:1px;background:#000000;"></div>
<div style="left:612px;top:836px;width:1308px;height:1px;background:#f1efec;"></div>
<div class="t" style="left:584.00px;top:821px;font-size:12px;color:#000000;letter-spacing:1.320px">31</div>
<div class="t" style="left:719.32px;top:820px;font-size:12px;color:#000000;letter-spacing:1.323px">130</div>
<div class="t" style="left:755.00px;top:820px;font-size:12px;color:#000000;letter-spacing:0.394px">Mozhe</div>
<div class="t" style="left:886.00px;top:820px;font-size:12px;color:#000000;letter-spacing:0.746px">Atkinson</div>
<div class="t" style="left:1013.00px;top:820px;font-size:12px;color:#000000;letter-spacing:0.152px">MATKINSO</div>
<div class="t" style="left:1106.00px;top:820px;font-size:12px;color:#000000;letter-spacing:1.216px">650.124.6234</div>
<div class="t" style="left:1262.60px;top:820px;font-size:12px;color:#000000;letter-spacing:1.082px">2005-10-30 00:00:00</div>
<div class="t" style="left:1406.00px;top:820px;font-size:12px;color:#000000;letter-spacing:-0.254px">ST_CLERK</div>
<div class="t" style="left:1555.19px;top:820px;font-size:12px;color:#000000;letter-spacing:1.194px">2,800</div>
<div class="t" style="left:1711.77px;top:820px;font-size:12px;color:#9b9b9b;letter-spacing:0.773px">[NULL]</div>
<div class="t" style="left:1865.32px;top:820px;font-size:12px;color:#000000;letter-spacing:1.323px">121</div>
<div style="left:612px;top:837px;width:1308px;height:18px;background:#ffffff;"></div>
<div style="left:580px;top:837px;width:31px;height:18px;background:#e8e8e8;"></div>
<div style="left:580px;top:855px;width:32px;height:1px;background:#000000;"></div>
<div style="left:612px;top:855px;width:1308px;height:1px;background:#f1efec;"></div>
<div class="t" style="left:584.00px;top:840px;font-size:12px;color:#000000;letter-spacing:1.320px">32</div>
<div class="t" style="left:719.32px;top:839px;font-size:12px;color:#000000;letter-spacing:1.323px">131</div>
<div class="t" style="left:755.00px;top:839px;font-size:12px;color:#000000;letter-spacing:0.131px">James</div>
<div class="t" style="left:886.00px;top:839px;font-size:12px;color:#000000;letter-spacing:0.555px">Marlow</div>
<div class="t" style="left:1013.00px;top:839px;font-size:12px;color:#000000;letter-spacing:-0.286px">JAMRLOW</div>
<div class="t" style="left:1106.00px;top:839px;font-size:12px;color:#000000;letter-spacing:1.216px">650.124.7234</div>
<div class="t" style="left:1262.60px;top:839px;font-size:12px;color:#000000;letter-spacing:1.082px">2005-02-16 00:00:00</div>
<div class="t" style="left:1406.00px;top:839px;font-size:12px;color:#000000;letter-spacing:-0.254px">ST_CLERK</div>
<div class="t" style="left:1555.19px;top:839px;font-size:12px;color:#000000;letter-spacing:1.194px">2,500</div>
<div class="t" style="left:1711.77px;top:839px;font-size:12px;color:#9b9b9b;letter-spacing:0.773px">[NULL]</div>
<div class="t" style="left:1865.32px;top:839px;font-size:12px;color:#000000;letter-spacing:1.323px">121</div>
<div style="left:612px;top:856px;width:1308px;height:18px;background:#dce6f2;"></div>
<div style="left:580px;top:856px;width:31px;height:18px;background:#e8e8e8;"></div>
<div style="left:580px;top:874px;width:32px;height:1px;background:#000000;"></div>
<div style="left:612px;top:874px;width:1308px;height:1px;background:#f1efec;"></div>
<div class="t" style="left:584.00px;top:859px;font-size:12px;color:#000000;letter-spacing:1.320px">33</div>
<div class="t" style="left:719.32px;top:858px;font-size:12px;color:#000000;letter-spacing:1.323px">132</div>
<div class="t" style="left:755.00px;top:858px;font-size:12px;color:#000000;letter-spacing:-1.172px">TJ</div>
<div class="t" style="left:886.00px;top:858px;font-size:12px;color:#000000;letter-spacing:0.328px">Olson</div>
<div class="t" style="left:1013.00px;top:858px;font-size:12px;color:#000000;letter-spacing:-0.335px">TJOLSON</div>
<div class="t" style="left:1106.00px;top:858px;font-size:12px;color:#000000;letter-spacing:1.216px">650.124.8234</div>
<div class="t" style="left:1262.60px;top:858px;font-size:12px;color:#000000;letter-spacing:1.082px">2007-04-10 00:00:00</div>
<div class="t" style="left:1406.00px;top:858px;font-size:12px;color:#000000;letter-spacing:-0.254px">ST_CLERK</div>
<div class="t" style="left:1555.19px;top:858px;font-size:12px;color:#000000;letter-spacing:1.194px">2,100</div>
<div class="t" style="left:1711.77px;top:858px;font-size:12px;color:#9b9b9b;letter-spacing:0.773px">[NULL]</div>
<div class="t" style="left:1865.32px;top:858px;font-size:12px;color:#000000;letter-spacing:1.323px">121</div>
<div style="left:612px;top:875px;width:1308px;height:18px;background:#ffffff;"></div>
<div style="left:580px;top:875px;width:31px;height:18px;background:#e8e8e8;"></div>
<div style="left:580px;top:893px;width:32px;height:1px;background:#000000;"></div>
<div style="left:612px;top:893px;width:1308px;height:1px;background:#f1efec;"></div>
<div class="t" style="left:584.00px;top:878px;font-size:12px;color:#000000;letter-spacing:1.320px">34</div>
<div class="t" style="left:719.32px;top:877px;font-size:12px;color:#000000;letter-spacing:1.323px">133</div>
<div class="t" style="left:755.00px;top:877px;font-size:12px;color:#000000">Jason</div>
<div class="t" style="left:886.00px;top:877px;font-size:12px;color:#000000;letter-spacing:0.443px">Mallin</div>
<div class="t" style="left:1013.00px;top:877px;font-size:12px;color:#000000;letter-spacing:-0.051px">JMALLIN</div>
<div class="t" style="left:1106.00px;top:877px;font-size:12px;color:#000000;letter-spacing:1.216px">650.127.1934</div>
<div class="t" style="left:1262.60px;top:877px;font-size:12px;color:#000000;letter-spacing:1.082px">2004-06-14 00:00:00</div>
<div class="t" style="left:1406.00px;top:877px;font-size:12px;color:#000000;letter-spacing:-0.254px">ST_CLERK</div>
<div class="t" style="left:1555.19px;top:877px;font-size:12px;color:#000000;letter-spacing:1.194px">3,300</div>
<div class="t" style="left:1711.77px;top:877px;font-size:12px;color:#9b9b9b;letter-spacing:0.773px">[NULL]</div>
<div class="t" style="left:1865.32px;top:877px;font-size:12px;color:#000000;letter-spacing:1.323px">122</div>
<div style="left:612px;top:894px;width:1308px;height:18px;background:#dce6f2;"></div>
<div style="left:580px;top:894px;width:31px;height:18px;background:#e8e8e8;"></div>
<div style="left:580px;top:912px;width:32px;height:1px;background:#000000;"></div>
<div style="left:612px;top:912px;width:1308px;height:1px;background:#f1efec;"></div>
<div class="t" style="left:584.00px;top:897px;font-size:12px;color:#000000;letter-spacing:1.320px">35</div>
<div class="t" style="left:719.32px;top:896px;font-size:12px;color:#000000;letter-spacing:1.323px">134</div>
<div class="t" style="left:755.00px;top:896px;font-size:12px;color:#000000;letter-spacing:0.520px">Michael</div>
<div class="t" style="left:886.00px;top:896px;font-size:12px;color:#000000;letter-spacing:0.385px">Rogers</div>
<div class="t" style="left:1013.00px;top:896px;font-size:12px;color:#000000;letter-spacing:-0.288px">MROGERS</div>
<div class="t" style="left:1106.00px;top:896px;font-size:12px;color:#000000;letter-spacing:1.216px">650.127.1834</div>
<div class="t" style="left:1262.60px;top:896px;font-size:12px;color:#000000;letter-spacing:1.082px">2006-08-26 00:00:00</div>
<div class="t" style="left:1406.00px;top:896px;font-size:12px;color:#000000;letter-spacing:-0.254px">ST_CLERK</div>
<div class="t" style="left:1555.19px;top:896px;font-size:12px;color:#000000;letter-spacing:1.194px">2,900</div>
<div class="t" style="left:1711.77px;top:896px;font-size:12px;color:#9b9b9b;letter-spacing:0.773px">[NULL]</div>
<div class="t" style="left:1865.32px;top:896px;font-size:12px;color:#000000;letter-spacing:1.323px">122</div>
<div style="left:612px;top:913px;width:1308px;height:18px;background:#ffffff;"></div>
<div style="left:580px;top:913px;width:31px;height:18px;background:#e8e8e8;"></div>
<div style="left:580px;top:931px;width:32px;height:1px;background:#000000;"></div>
<div style="left:612px;top:931px;width:1308px;height:1px;background:#f1efec;"></div>
<div class="t" style="left:584.00px;top:916px;font-size:12px;color:#000000;letter-spacing:1.320px">36</div>
<div class="t" style="left:719.32px;top:915px;font-size:12px;color:#000000;letter-spacing:1.323px">135</div>
<div class="t" style="left:755.00px;top:915px;font-size:12px;color:#000000;letter-spacing:0.164px">Ki</div>
<div class="t" style="left:886.00px;top:915px;font-size:12px;color:#000000;letter-spacing:0.104px">Gee</div>
<div class="t" style="left:1013.00px;top:915px;font-size:12px;color:#000000;letter-spacing:-0.090px">KGEE</div>
<div class="t" style="left:1106.00px;top:915px;font-size:12px;color:#000000;letter-spacing:1.216px">650.127.1734</div>
<div class="t" style="left:1262.60px;top:915px;font-size:12px;color:#000000;letter-spacing:1.082px">2007-12-12 00:00:00</div>
<div class="t" style="left:1406.00px;top:915px;font-size:12px;color:#000000;letter-spacing:-0.254px">ST_CLERK</div>
<div class="t" style="left:1555.19px;top:915px;font-size:12px;color:#000000;letter-spacing:1.194px">2,400</div>
<div class="t" style="left:1711.77px;top:915px;font-size:12px;color:#9b9b9b;letter-spacing:0.773px">[NULL]</div>
<div class="t" style="left:1865.32px;top:915px;font-size:12px;color:#000000;letter-spacing:1.323px">122</div>
<div style="left:612px;top:932px;width:1308px;height:18px;background:#dce6f2;"></div>
<div style="left:580px;top:932px;width:31px;height:18px;background:#e8e8e8;"></div>
<div style="left:580px;top:950px;width:32px;height:1px;background:#000000;"></div>
<div style="left:612px;top:950px;width:1308px;height:1px;background:#f1efec;"></div>
<div class="t" style="left:584.00px;top:935px;font-size:12px;color:#000000;letter-spacing:1.320px">37</div>
<div class="t" style="left:719.32px;top:934px;font-size:12px;color:#000000;letter-spacing:1.323px">136</div>
<div class="t" style="left:755.00px;top:934px;font-size:12px;color:#000000;letter-spacing:0.263px">Hazel</div>
<div class="t" style="left:886.00px;top:934px;font-size:12px;color:#000000;letter-spacing:0.662px">Philtanker</div>
<div class="t" style="left:1013.00px;top:934px;font-size:12px;color:#000000;letter-spacing:0.305px">HPHILTAN</div>
<div class="t" style="left:1106.00px;top:934px;font-size:12px;color:#000000;letter-spacing:1.216px">650.127.1634</div>
<div class="t" style="left:1262.60px;top:934px;font-size:12px;color:#000000;letter-spacing:1.082px">2008-02-06 00:00:00</div>
<div class="t" style="left:1406.00px;top:934px;font-size:12px;color:#000000;letter-spacing:-0.254px">ST_CLERK</div>
<div class="t" style="left:1555.19px;top:934px;font-size:12px;color:#000000;letter-spacing:1.194px">2,200</div>
<div class="t" style="left:1711.77px;top:934px;font-size:12px;color:#9b9b9b;letter-spacing:0.773px">[NULL]</div>
<div class="t" style="left:1865.32px;top:934px;font-size:12px;color:#000000;letter-spacing:1.323px">122</div>
<div style="left:612px;top:951px;width:1308px;height:18px;background:#ffffff;"></div>
<div style="left:580px;top:951px;width:31px;height:18px;background:#e8e8e8;"></div>
<div style="left:580px;top:969px;width:32px;height:1px;background:#000000;"></div>
<div style="left:612px;top:969px;width:1308px;height:1px;background:#f1efec;"></div>
<div class="t" style="left:584.00px;top:954px;font-size:12px;color:#000000;letter-spacing:1.320px">38</div>
<div class="t" style="left:719.32px;top:953px;font-size:12px;color:#000000;letter-spacing:1.323px">137</div>
<div class="t" style="left:755.00px;top:953px;font-size:12px;color:#000000;letter-spacing:0.385px">Renske</div>
<div class="t" style="left:886.00px;top:953px;font-size:12px;color:#000000;letter-spacing:0.828px">Ladwig</div>
<div class="t" style="left:1013.00px;top:953px;font-size:12px;color:#000000;letter-spacing:0.141px">RLADWIG</div>
<div class="t" style="left:1106.00px;top:953px;font-size:12px;color:#000000;letter-spacing:1.216px">650.121.1234</div>
<div class="t" style="left:1262.60px;top:953px;font-size:12px;color:#000000;letter-spacing:1.082px">2003-07-14 00:00:00</div>
<div class="t" style="left:1406.00px;top:953px;font-size:12px;color:#000000;letter-spacing:-0.254px">ST_CLERK</div>
<div class="t" style="left:1555.19px;top:953px;font-size:12px;color:#000000;letter-spacing:1.194px">3,600</div>
<div class="t" style="left:1711.77px;top:953px;font-size:12px;color:#9b9b9b;letter-spacing:0.773px">[NULL]</div>
<div class="t" style="left:1865.32px;top:953px;font-size:12px;color:#000000;letter-spacing:1.323px">123</div>
<div style="left:612px;top:970px;width:1308px;height:18px;background:#dce6f2;"></div>
<div style="left:580px;top:970px;width:31px;height:18px;background:#e8e8e8;"></div>
<div style="left:580px;top:988px;width:32px;height:1px;background:#000000;"></div>
<div style="left:612px;top:988px;width:1308px;height:1px;background:#f1efec;"></div>
<div class="t" style="left:584.00px;top:973px;font-size:12px;color:#000000;letter-spacing:1.320px">39</div>
<div class="t" style="left:719.32px;top:972px;font-size:12px;color:#000000;letter-spacing:1.323px">138</div>
<div class="t" style="left:755.00px;top:972px;font-size:12px;color:#000000;letter-spacing:0.897px">Stephen</div>
<div class="t" style="left:886.00px;top:972px;font-size:12px;color:#000000;letter-spacing:0.443px">Stiles</div>
<div class="t" style="left:1013.00px;top:972px;font-size:12px;color:#000000;letter-spacing:0.092px">SSTILES</div>
<div class="t" style="left:1106.00px;top:972px;font-size:12px;color:#000000;letter-spacing:1.216px">650.121.2034</div>
<div class="t" style="left:1262.60px;top:972px;font-size:12px;color:#000000;letter-spacing:1.082px">2005-10-26 00:00:00</div>
<div class="t" style="left:1406.00px;top:972px;font-size:12px;color:#000000;letter-spacing:-0.254px">ST_CLERK</div>
<div class="t" style="left:1555.19px;top:972px;font-size:12px;color:#000000;letter-spacing:1.194px">3,200</div>
<div class="t" style="left:1711.77px;top:972px;font-size:12px;color:#9b9b9b;letter-spacing:0.773px">[NULL]</div>
<div class="t" style="left:1865.32px;top:972px;font-size:12px;color:#000000;letter-spacing:1.323px">123</div>
<div style="left:612px;top:989px;width:1308px;height:18px;background:#ffffff;"></div>
<div style="left:580px;top:989px;width:31px;height:18px;background:#e8e8e8;"></div>
<div style="left:580px;top:1007px;width:32px;height:1px;background:#000000;"></div>
<div style="left:612px;top:1007px;width:1308px;height:1px;background:#f1efec;"></div>
<div class="t" style="left:584.00px;top:992px;font-size:12px;color:#000000;letter-spacing:1.320px">40</div>
<div class="t" style="left:719.32px;top:991px;font-size:12px;color:#000000;letter-spacing:1.323px">139</div>
<div class="t" style="left:755.00px;top:991px;font-size:12px;color:#000000;letter-spacing:0.242px">John</div>
<div class="t" style="left:886.00px;top:991px;font-size:12px;color:#000000;letter-spacing:0.214px">Seo</div>
<div class="t" style="left:1013.00px;top:991px;font-size:12px;color:#000000;letter-spacing:-0.586px">JSEO</div>
<div class="t" style="left:1106.00px;top:991px;font-size:12px;color:#000000;letter-spacing:1.216px">650.121.2019</div>
<div class="t" style="left:1262.60px;top:991px;font-size:12px;color:#000000;letter-spacing:1.082px">2006-02-12 00:00:00</div>
<div class="t" style="left:1406.00px;top:991px;font-size:12px;color:#000000;letter-spacing:-0.254px">ST_CLERK</div>
<div class="t" style="left:1555.19px;top:991px;font-size:12px;color:#000000;letter-spacing:1.194px">2,700</div>
<div class="t" style="left:1711.77px;top:991px;font-size:12px;color:#9b9b9b;letter-spacing:0.773px">[NULL]</div>
<div class="t" style="left:1865.32px;top:991px;font-size:12px;color:#000000;letter-spacing:1.323px">123</div>
<div style="left:612px;top:1008px;width:1308px;height:18px;background:#dce6f2;"></div>
<div style="left:580px;top:1008px;width:31px;height:18px;background:#e8e8e8;"></div>
<div style="left:580px;top:1026px;width:32px;height:1px;background:#000000;"></div>
<div style="left:612px;top:1026px;width:1308px;height:1px;background:#f1efec;"></div>
<div class="t" style="left:584.00px;top:1011px;font-size:12px;color:#000000;letter-spacing:1.320px">41</div>
<div class="t" style="left:719.32px;top:1010px;font-size:12px;color:#000000;letter-spacing:1.323px">140</div>
<div class="t" style="left:755.00px;top:1010px;font-size:12px;color:#000000;letter-spacing:0.216px">Joshua</div>
<div class="t" style="left:886.00px;top:1010px;font-size:12px;color:#000000;letter-spacing:0.328px">Patel</div>
<div class="t" style="left:1013.00px;top:1010px;font-size:12px;color:#000000;letter-spacing:-0.206px">JPATEL</div>
<div class="t" style="left:1106.00px;top:1010px;font-size:12px;color:#000000;letter-spacing:1.216px">650.121.1834</div>
<div class="t" style="left:1262.60px;top:1010px;font-size:12px;color:#000000;letter-spacing:1.082px">2006-04-06 00:00:00</div>
<div class="t" style="left:1406.00px;top:1010px;font-size:12px;color:#000000;letter-spacing:-0.254px">ST_CLERK</div>
<div class="t" style="left:1555.19px;top:1010px;font-size:12px;color:#000000;letter-spacing:1.194px">2,500</div>
<div class="t" style="left:1711.77px;top:1010px;font-size:12px;color:#9b9b9b;letter-spacing:0.773px">[NULL]</div>
<div class="t" style="left:1865.32px;top:1010px;font-size:12px;color:#000000;letter-spacing:1.323px">123</div>
<div style="left:612px;top:1027px;width:1308px;height:14px;background:#ffffff;"></div>
<div style="left:580px;top:1027px;width:31px;height:14px;background:#e8e8e8;"></div>
<div class="t" style="left:584.00px;top:1030px;font-size:12px;color:#000000;letter-spacing:1.320px">42</div>
<div class="t" style="left:719.32px;top:1029px;font-size:12px;color:#000000;letter-spacing:1.323px">141</div>
<div class="t" style="left:755.00px;top:1029px;font-size:12px;color:#000000;letter-spacing:0.737px">Trenna</div>
<div class="t" style="left:886.00px;top:1029px;font-size:12px;color:#000000">Rajs</div>
<div class="t" style="left:1013.00px;top:1029px;font-size:12px;color:#000000;letter-spacing:-0.603px">TRAJS</div>
<div class="t" style="left:1106.00px;top:1029px;font-size:12px;color:#000000;letter-spacing:1.216px">650.121.8009</div>
<div class="t" style="left:1262.60px;top:1029px;font-size:12px;color:#000000;letter-spacing:1.082px">2003-10-17 00:00:00</div>
<div class="t" style="left:1406.00px;top:1029px;font-size:12px;color:#000000;letter-spacing:-0.254px">ST_CLERK</div>
<div class="t" style="left:1555.19px;top:1029px;font-size:12px;color:#000000;letter-spacing:1.194px">3,500</div>
<div class="t" style="left:1711.77px;top:1029px;font-size:12px;color:#9b9b9b;letter-spacing:0.773px">[NULL]</div>
<div class="t" style="left:1865.32px;top:1029px;font-size:12px;color:#000000;letter-spacing:1.323px">124</div>
<div style="left:749px;top:248px;width:1px;height:793px;background:#eeeeee;"></div>
<div style="left:880px;top:248px;width:1px;height:793px;background:#eeeeee;"></div>
<div style="left:1007px;top:248px;width:1px;height:793px;background:#eeeeee;"></div>
<div style="left:1100px;top:248px;width:1px;height:793px;background:#eeeeee;"></div>
<div style="left:1256px;top:248px;width:1px;height:793px;background:#eeeeee;"></div>
<div style="left:1400px;top:248px;width:1px;height:793px;background:#eeeeee;"></div>
<div style="left:1496px;top:248px;width:1px;height:793px;background:#eeeeee;"></div>
<div style="left:1597px;top:248px;width:1px;height:793px;background:#eeeeee;"></div>
<div style="left:1760px;top:248px;width:1px;height:793px;background:#eeeeee;"></div>
<div style="left:1895px;top:248px;width:1px;height:793px;background:#eeeeee;"></div>
<div style="left:611px;top:248px;width:1px;height:793px;background:#000000;"></div>
<div style="left:1915px;top:223px;width:3px;height:294px;background:rgba(90,90,90,0.62);border-radius:2px;"></div>
<div style="left:583px;top:1037px;width:1207px;height:3px;background:rgba(90,90,90,0.62);border-radius:2px;"></div>
<div style="left:580px;top:1041px;width:1340px;height:8px;background:#e3e0dc;"></div>
<div style="left:593px;top:1042px;width:1px;height:7px;background:#cdc9c4;"></div>
<div style="left:715px;top:1042px;width:1px;height:7px;background:#cdc9c4;"></div>
<div style="left:783px;top:1044px;width:67px;height:6px;border:1px solid #c8c4bf;background:#ffffff;border-radius:3px;"></div>
<svg style="left:236px;top:560px" width="124" height="76" viewBox="0 0 124 76"><g transform="translate(-236,-560)"><polygon points="352.3,566.6 353.4,568.2 272.3,619.2 276.6,625.2 242,630.6 263.4,602.6 266.9,609.6" fill="#f65050" stroke="#f65050" stroke-width="0.6" stroke-linejoin="round"/></g></svg>
</body></html>
